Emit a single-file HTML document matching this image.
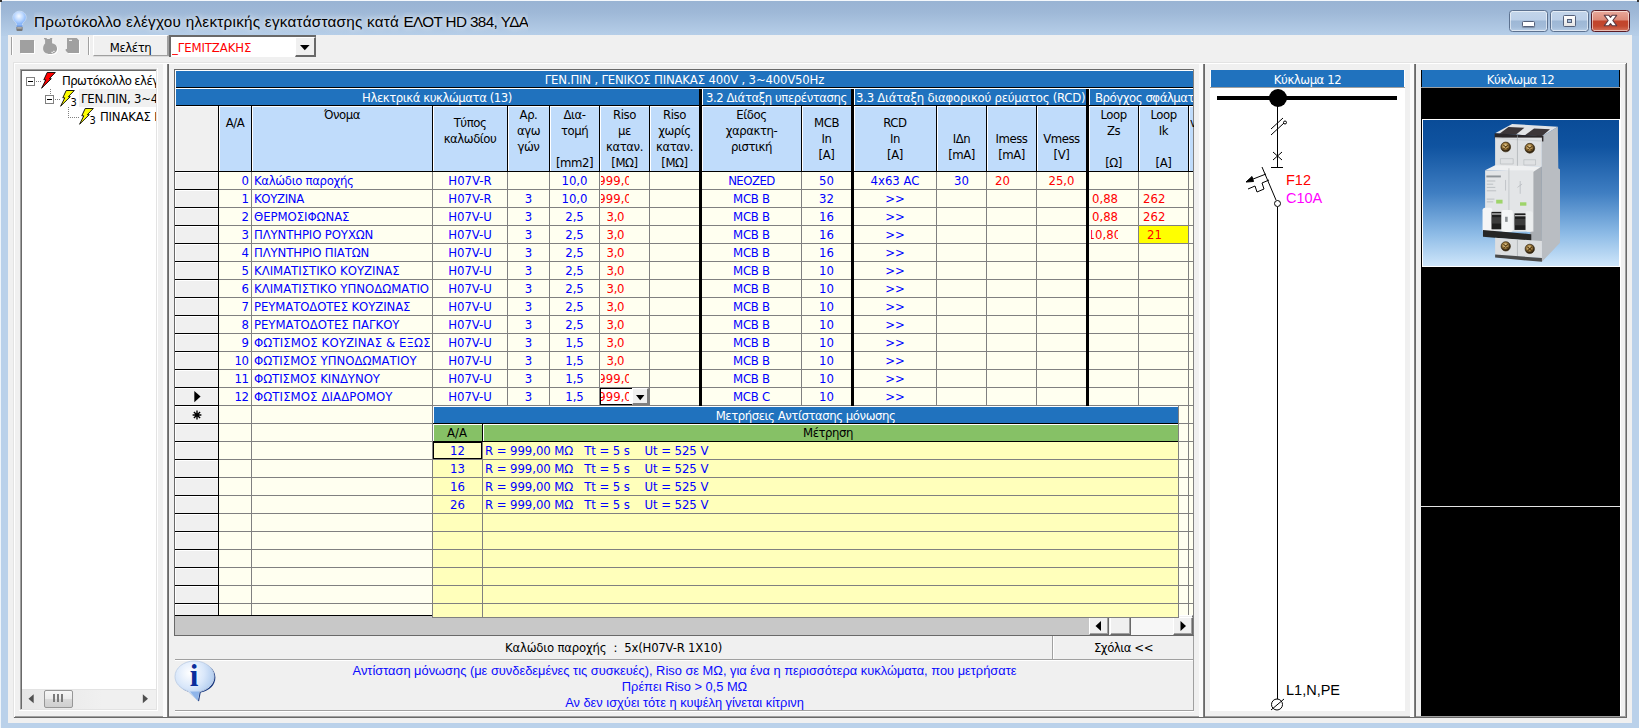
<!DOCTYPE html>
<html lang="el"><head><meta charset="utf-8"><title>Πρωτόκολλο ελέγχου</title>
<style>
html,body{margin:0;padding:0}
body{width:1639px;height:728px;overflow:hidden;position:relative;background:#bad1ea;font-family:"DejaVu Sans Condensed","Liberation Sans",sans-serif;font-size:13px;color:#000}
div,span{box-sizing:border-box}
.a{position:absolute}
.t{position:absolute;white-space:pre;line-height:18px;height:18px;overflow:hidden}
.c{text-align:center}
.r{text-align:right}
.b{color:#0000ff}
.rd{color:#ff0000}
.w{color:#fff}
.ls{letter-spacing:-0.45px}
.d{letter-spacing:-0.18px}
.dl{letter-spacing:-0.32px}
svg{position:absolute;overflow:visible}
</style></head><body>

<div class="a" style="left:0px;top:0px;width:1639px;height:36px;background:linear-gradient(#98b3d3 0,#9eb8d7 12px,#b6cee8 35px);"></div>
<div class="a" style="left:0px;top:0px;width:1639px;height:1px;background:#f4f8fc;"></div>
<div class="a" style="left:0px;top:0px;width:1px;height:728px;background:#eef4fa;"></div>
<div class="a" style="left:0px;top:0px;width:2px;height:2px;background:#333;"></div>
<div class="a" style="left:1637px;top:0px;width:2px;height:2px;background:#333;"></div>
<div class="a" style="left:8px;top:35px;width:1624px;height:688px;background:#f0f0f0;"></div>
<svg style="left:11px;top:10px" width="18" height="22" viewBox="0 0 18 22">
<defs><radialGradient id="gb" cx="0.45" cy="0.35" r="0.6"><stop offset="0" stop-color="#f4f9ff"/><stop offset="0.55" stop-color="#b9d6ff"/><stop offset="1" stop-color="#7fb0f8"/></radialGradient></defs>
<path d="M8.5 1.2C4.6 1.2 1.8 3.9 1.8 7.4c0 2.4 1.5 4 2.9 5.2c.6.6.9 1.5.9 2.6h5.8c0-1.100.3-2 .9-2.600C13.700 11.400 15.200 9.800 15.200 7.400C15.200 3.900 12.400 1.200 8.500 1.200z" fill="url(#gb)" stroke="#c9dcf4" stroke-width="0.8"/>
<rect x="5.6" y="15.200" width="5.800" height="1.700" fill="#6ea0f0"/>
<rect x="5.400" y="16.700" width="6.200" height="4.200" rx="0.8" fill="#777"/>
<rect x="6.200" y="17.500" width="4.600" height="0.900" fill="#ddd"/>
</svg>
<div class="t" style="left:34px;top:12px;font-family:'Liberation Sans',sans-serif;font-size:15.25px;line-height:20px;height:22px;text-shadow:0 0 5px rgba(255,255,255,.9),0 0 9px rgba(255,255,255,.7)"><span style="letter-spacing:0.26px">Πρωτόκολλο ελέγχου ηλεκτρικής εγκατάστασης κατά </span><span style="letter-spacing:-0.62px">ΕΛΟΤ HD 384, ΥΔΑ</span></div>
<div class="a" style="left:1509px;top:10px;width:39px;height:22px;border:1px solid #5d7290;border-radius:3.500px;background:linear-gradient(#c3d5ea 0,#bcd0e8 45%,#9db7d5 50%,#a3bcd9 80%,#b7cde6 100%);box-shadow:inset 0 0 0 1px rgba(255,255,255,.55)"></div>
<div class="a" style="left:1550px;top:10px;width:39px;height:22px;border:1px solid #5d7290;border-radius:3.500px;background:linear-gradient(#c3d5ea 0,#bcd0e8 45%,#9db7d5 50%,#a3bcd9 80%,#b7cde6 100%);box-shadow:inset 0 0 0 1px rgba(255,255,255,.55)"></div>
<div class="a" style="left:1591px;top:10px;width:39px;height:22px;border:1px solid #5b1b24;border-radius:3.500px;background:linear-gradient(#e9a99b 0,#dc8a79 45%,#c2442b 50%,#c2472e 75%,#d4735c 100%);box-shadow:inset 0 0 0 1px rgba(255,255,255,.55)"></div>
<div class="a" style="left:1522px;top:21px;width:13px;height:6px;background:#fff;border:1px solid #54607a;border-radius:1.5px;box-shadow:0 1px 1px rgba(0,0,0,.25)"></div>
<div class="a" style="left:1563px;top:15px;width:13px;height:12px;background:linear-gradient(#fff,#e4e4e4);border:1px solid #54607a;border-radius:1.5px"></div>
<div class="a" style="left:1567px;top:19px;width:5px;height:4px;background:#a9c0dc;border:1px solid #54607a"></div>
<svg style="left:1603px;top:14px" width="15" height="13" viewBox="0 0 15 13"><path d="M1.300 1.300h4.600l1.600 2.100l1.600-2.100h4.600l-3.900 5.200l3.900 5.200h-4.600l-1.600-2.100l-1.600 2.100h-4.600l3.900-5.200z" fill="#fff" stroke="#5a3a44" stroke-width="1.100" stroke-linejoin="round"/></svg>
<div class="a" style="left:11px;top:37px;width:1px;height:18px;background:#a0a0a0;"></div>
<div class="a" style="left:12px;top:37px;width:1px;height:18px;background:#fff;"></div>
<div class="a" style="left:88px;top:37px;width:1px;height:18px;background:#a0a0a0;"></div>
<div class="a" style="left:89px;top:37px;width:1px;height:18px;background:#fff;"></div>
<div class="a" style="left:20px;top:40px;width:14px;height:13px;background:#a0a0a0;box-shadow:1px 1px 0 #fff"></div>
<svg style="left:42px;top:37px" width="18" height="19" viewBox="0 0 18 19"><path d="M2 1h2.400l.800.900h2.400l.800-.900h1.800v5.300c3 .400 4.900 2.700 4.900 5.200c0 3.300-2.700 5.500-7 5.500s-7-2.200-7-5.500c0-2.300 1-4.300 2-5v-3.700l-1.100-.800z" fill="#fff" transform="translate(1,1)"/><path d="M2 1h2.400l.800.900h2.400l.800-.900h1.800v5.300c3 .400 4.900 2.700 4.900 5.200c0 3.300-2.700 5.500-7 5.500s-7-2.200-7-5.500c0-2.300 1-4.300 2-5v-3.700l-1.100-.800z" fill="#a0a0a0"/><rect x="9.500" y="14.800" width="1.200" height="1.200" fill="#fff"/><rect x="11.300" y="13.800" width="1.200" height="1.200" fill="#fff"/></svg>
<svg style="left:65px;top:37px" width="17" height="19" viewBox="0 0 17 19"><path d="M2 1h9.700l2.300 2.300v12.700h-11l-2.300-2.200v-1.800h1.300z" fill="#fff" transform="translate(1,1)"/><path d="M2 1h9.700l2.300 2.300v12.700h-11l-2.300-2.200v-1.800h1.300z" fill="#a0a0a0"/><rect x="4" y="2.800" width="3" height="1" fill="#fff"/></svg>
<div class="a c" style="left:93px;top:35px;width:76px;height:21px;background:#f0f0f0;border-top:1px solid #fff;border-left:1px solid #fff;border-right:2px solid #a0a0a0;border-bottom:1px solid #a0a0a0;box-shadow:0 1px 0 #dcdcdc"></div>
<div class="t c ls" style="left:93px;top:38.5px;width:75px;">Μελέτη</div>
<div class="a" style="left:169px;top:35px;width:147px;height:22px;background:#fff;border-top:2px solid #696969;border-left:2px solid #696969"></div>
<div class="t rd" style="left:172px;top:39px;width:120px;letter-spacing:-0.1px">_ΓΕΜΙΤΖΑΚΗΣ</div>
<div class="a" style="left:295px;top:37px;width:21px;height:20px;background:#f0f0f0;border-top:1px solid #fff;border-left:1px solid #fff;border-right:2px solid #696969;border-bottom:2px solid #696969"></div>
<svg style="left:299.500px;top:45px" width="10" height="6"><path d="M0 0h9.600l-4.800 5.200z" fill="#000"/></svg>
<div class="a" style="left:13px;top:62px;width:1614px;height:1px;background:#e3e3e3;"></div>
<div class="a" style="left:13px;top:62px;width:1px;height:656px;background:#e3e3e3;"></div>
<div class="a" style="left:14px;top:63px;width:1612px;height:1px;background:#fff;"></div>
<div class="a" style="left:14px;top:63px;width:1px;height:655px;background:#fff;"></div>
<div class="a" style="left:14px;top:717px;width:1613px;height:1px;background:#696969;"></div>
<div class="a" style="left:1626px;top:63px;width:1px;height:655px;background:#696969;"></div>
<div class="a" style="left:15px;top:716px;width:1611px;height:1px;background:#a0a0a0;"></div>
<div class="a" style="left:1625px;top:64px;width:1px;height:653px;background:#a0a0a0;"></div>
<div class="a" style="left:20px;top:69px;width:137px;height:641px;background:#fff;border-top:1px solid #a0a0a0;border-left:1px solid #a0a0a0;border-right:1px solid #e3e3e3;border-bottom:1px solid #e3e3e3;box-shadow:inset 1px 1px 0 #696969"></div>
<div class="a" style="left:19px;top:710px;width:139px;height:1px;background:#fff;"></div>
<div class="a" style="left:157px;top:68px;width:1px;height:643px;background:#fff;"></div>
<div class="a" style="left:79px;top:89px;width:77px;height:18px;background:#f0f0f0;"></div>
<div class="a" style="left:36px;top:81px;width:6px;height:1px;background:none;background-image:linear-gradient(90deg,#808080 1px,transparent 1px);background-size:2px 1px"></div>
<div class="a" style="left:50px;top:89px;width:1px;height:6px;background:none;background-image:linear-gradient(#808080 1px,transparent 1px);background-size:1px 2px"></div>
<div class="a" style="left:55px;top:99px;width:6px;height:1px;background:none;background-image:linear-gradient(90deg,#808080 1px,transparent 1px);background-size:2px 1px"></div>
<div class="a" style="left:68px;top:107px;width:1px;height:10px;background:none;background-image:linear-gradient(#808080 1px,transparent 1px);background-size:1px 2px"></div>
<div class="a" style="left:68px;top:117px;width:12px;height:1px;background:none;background-image:linear-gradient(90deg,#808080 1px,transparent 1px);background-size:2px 1px"></div>
<div class="a" style="left:26px;top:77px;width:9px;height:9px;background:#fff;border:1px solid #808080"></div>
<div class="a" style="left:28px;top:81px;width:5px;height:1px;background:#000;"></div>
<div class="a" style="left:45px;top:95px;width:9px;height:9px;background:#fff;border:1px solid #808080"></div>
<div class="a" style="left:47px;top:99px;width:5px;height:1px;background:#000;"></div>
<svg style="left:41px;top:71.5px" width="16" height="17" viewBox="0 0 16 17"><path d="M6.200 0.500H14.300L8.300 6.700H10.300L0.600 16.200L4.800 7.800H2.800Z" fill="#ff0000" stroke="#000" stroke-width="0.9" stroke-linejoin="miter"/></svg>
<svg style="left:60px;top:89.5px" width="16" height="17" viewBox="0 0 16 17"><path d="M6.200 0.500H14.300L8.300 6.700H10.300L0.600 16.200L4.800 7.800H2.800Z" fill="#ffff00" stroke="#000" stroke-width="0.9" stroke-linejoin="miter"/></svg>
<div class="t" style="left:70.5px;top:97px;font-size:11px;line-height:12px;height:12px">3</div>
<svg style="left:79px;top:107.5px" width="16" height="17" viewBox="0 0 16 17"><path d="M6.200 0.500H14.300L8.300 6.700H10.300L0.600 16.200L4.800 7.800H2.800Z" fill="#ffff00" stroke="#000" stroke-width="0.9" stroke-linejoin="miter"/></svg>
<div class="t" style="left:89.5px;top:115px;font-size:11px;line-height:12px;height:12px">3</div>
<div class="t " style="left:62px;top:72px;width:94px;letter-spacing:-0.6px">Πρωτόκολλο ελέγχου</div>
<div class="t " style="left:81px;top:90px;width:75px;letter-spacing:-0.2px">ΓΕΝ.ΠΙΝ, 3~400V</div>
<div class="t " style="left:100px;top:108px;width:56px;letter-spacing:-0.2px">ΠΙΝΑΚΑΣ ΙΣΟΓ</div>
<div class="a" style="left:22px;top:689px;width:134px;height:20px;background:linear-gradient(90deg,#e6e6e6,#f0f0f0 60%);border-top:1px solid #e3e3e3"></div>
<svg style="left:28px;top:693.500px" width="7" height="10"><path d="M5.700 0.300v9l-5.200-4.500z" fill="#505050"/></svg>
<svg style="left:141.500px;top:693.500px" width="7" height="10"><path d="M0.800 0.300v9l5.200-4.500z" fill="#505050"/></svg>
<div class="a" style="left:44px;top:690px;width:29px;height:18px;border:1px solid #979797;border-radius:2px;background:linear-gradient(#f6f6f6 0,#eaeaea 48%,#d9d9d9 52%,#cfcfcf 100%)"></div>
<div class="a" style="left:53px;top:694px;width:2px;height:8px;background:#7a7a7a;"></div>
<div class="a" style="left:57px;top:694px;width:2px;height:8px;background:#7a7a7a;"></div>
<div class="a" style="left:61px;top:694px;width:2px;height:8px;background:#7a7a7a;"></div>
<div class="a" style="left:163px;top:64px;width:4px;height:653px;background:#fbfbfb;"></div>
<div class="a" style="left:167px;top:64px;width:1px;height:653px;background:#808080;"></div>
<div class="a" style="left:168px;top:64px;width:1px;height:653px;background:#696969;"></div>
<div class="a" style="left:174px;top:69px;width:1020px;height:1px;background:#696969;"></div>
<div class="a" style="left:174px;top:69px;width:1px;height:567px;background:#696969;"></div>
<div class="a" style="left:1193px;top:69px;width:1px;height:567px;background:#808080;"></div>
<div class="a" style="left:175px;top:70px;width:1018px;height:546px;background:#000;"></div>
<div class="a" style="left:175px;top:70px;width:1018px;height:1px;background:#fff;"></div>
<div class="a" style="left:175px;top:70px;width:1px;height:36px;background:#fff;"></div>
<div class="a" style="left:175px;top:88px;width:1018px;height:1px;background:#fff;"></div>
<div class="a" style="left:176px;top:71px;width:1017px;height:16px;background:#2072be;"></div>
<div class="t c w" style="left:175px;top:70.5px;width:1019px;letter-spacing:-0.18px">ΓΕΝ.ΠΙΝ , ΓΕΝΙΚΟΣ ΠΙΝΑΚΑΣ 400V , 3~400V50Hz</div>
<div class="a" style="left:175px;top:88px;width:1px;height:17px;background:#fff;"></div>
<div class="a" style="left:176px;top:89px;width:523px;height:16px;background:#2072be;"></div>
<div class="t c w ls" style="left:175px;top:89px;width:524px;">Ηλεκτρικά κυκλώματα (13)</div>
<div class="a" style="left:702px;top:88px;width:1px;height:17px;background:#fff;"></div>
<div class="a" style="left:703px;top:89px;width:148px;height:16px;background:#2072be;"></div>
<div class="t c w ls" style="left:702px;top:89px;width:149px;">3.2 Διάταξη υπερέντασης</div>
<div class="a" style="left:854px;top:88px;width:1px;height:17px;background:#fff;"></div>
<div class="a" style="left:855px;top:89px;width:231px;height:16px;background:#2072be;"></div>
<div class="t w" style="left:854px;top:89px;width:232px;letter-spacing:-0.24px;padding-left:2px">3.3 Διάταξη διαφορικού ρεύματος (RCD)</div>
<div class="a" style="left:1089px;top:88px;width:1px;height:17px;background:#fff;"></div>
<div class="a" style="left:1090px;top:89px;width:103px;height:16px;background:#2072be;"></div>
<div class="t c w ls" style="left:1089px;top:89px;width:104px;text-align:left;padding-left:6px">Βρόγχος σφάλματος</div>
<div class="a" style="left:175px;top:106px;width:43px;height:65px;background:#f0f0f0;box-shadow:inset 1px 1px 0 #fff"></div>
<div class="a" style="left:219px;top:106px;width:32px;height:65px;background:#c0dcfb;box-shadow:inset 1px 1px 0 #fff"></div>
<div class="a" style="left:252px;top:106px;width:180px;height:65px;background:#c0dcfb;box-shadow:inset 1px 1px 0 #fff"></div>
<div class="a" style="left:433px;top:106px;width:74px;height:65px;background:#c0dcfb;box-shadow:inset 1px 1px 0 #fff"></div>
<div class="a" style="left:508px;top:106px;width:41px;height:65px;background:#c0dcfb;box-shadow:inset 1px 1px 0 #fff"></div>
<div class="a" style="left:550px;top:106px;width:49px;height:65px;background:#c0dcfb;box-shadow:inset 1px 1px 0 #fff"></div>
<div class="a" style="left:600px;top:106px;width:49px;height:65px;background:#c0dcfb;box-shadow:inset 1px 1px 0 #fff"></div>
<div class="a" style="left:650px;top:106px;width:49px;height:65px;background:#c0dcfb;box-shadow:inset 1px 1px 0 #fff"></div>
<div class="a" style="left:702px;top:106px;width:99px;height:65px;background:#c0dcfb;box-shadow:inset 1px 1px 0 #fff"></div>
<div class="a" style="left:802px;top:106px;width:49px;height:65px;background:#c0dcfb;box-shadow:inset 1px 1px 0 #fff"></div>
<div class="a" style="left:854px;top:106px;width:82px;height:65px;background:#c0dcfb;box-shadow:inset 1px 1px 0 #fff"></div>
<div class="a" style="left:937px;top:106px;width:49px;height:65px;background:#c0dcfb;box-shadow:inset 1px 1px 0 #fff"></div>
<div class="a" style="left:987px;top:106px;width:49px;height:65px;background:#c0dcfb;box-shadow:inset 1px 1px 0 #fff"></div>
<div class="a" style="left:1037px;top:106px;width:49px;height:65px;background:#c0dcfb;box-shadow:inset 1px 1px 0 #fff"></div>
<div class="a" style="left:1089px;top:106px;width:49px;height:65px;background:#c0dcfb;box-shadow:inset 1px 1px 0 #fff"></div>
<div class="a" style="left:1139px;top:106px;width:49px;height:65px;background:#c0dcfb;box-shadow:inset 1px 1px 0 #fff"></div>
<div class="a" style="left:1189px;top:106px;width:4px;height:65px;background:#c0dcfb;box-shadow:inset 1px 1px 0 #fff"></div>
<div class="t c ls" style="left:219px;top:114px;width:32px;">Α/Α</div>
<div class="t c ls" style="left:252px;top:106px;width:180px;">Όνομα</div>
<div class="t c ls" style="left:433px;top:114px;width:74px;">Τύπος</div>
<div class="t c ls" style="left:433px;top:130px;width:74px;">καλωδίου</div>
<div class="t c ls" style="left:508px;top:106px;width:41px;">Αρ.</div>
<div class="t c ls" style="left:508px;top:122px;width:41px;">αγω</div>
<div class="t c ls" style="left:508px;top:138px;width:41px;">γών</div>
<div class="t c ls" style="left:550px;top:106px;width:49px;">Δια-</div>
<div class="t c ls" style="left:550px;top:122px;width:49px;">τομή</div>
<div class="t c ls" style="left:550px;top:154px;width:49px;">[mm2]</div>
<div class="t c ls" style="left:600px;top:106px;width:49px;">Riso</div>
<div class="t c ls" style="left:600px;top:122px;width:49px;">με</div>
<div class="t c ls" style="left:600px;top:138px;width:49px;">καταν.</div>
<div class="t c ls" style="left:600px;top:154px;width:49px;">[ΜΩ]</div>
<div class="t c ls" style="left:650px;top:106px;width:49px;">Riso</div>
<div class="t c ls" style="left:650px;top:122px;width:49px;">χωρίς</div>
<div class="t c ls" style="left:650px;top:138px;width:49px;">καταν.</div>
<div class="t c ls" style="left:650px;top:154px;width:49px;">[ΜΩ]</div>
<div class="t c ls" style="left:702px;top:106px;width:99px;">Είδος</div>
<div class="t c ls" style="left:702px;top:122px;width:99px;">χαρακτη-</div>
<div class="t c ls" style="left:702px;top:138px;width:99px;">ριστική</div>
<div class="t c ls" style="left:802px;top:114px;width:49px;">MCB</div>
<div class="t c ls" style="left:802px;top:130px;width:49px;">In</div>
<div class="t c ls" style="left:802px;top:146px;width:49px;">[A]</div>
<div class="t c ls" style="left:854px;top:114px;width:82px;">RCD</div>
<div class="t c ls" style="left:854px;top:130px;width:82px;">In</div>
<div class="t c ls" style="left:854px;top:146px;width:82px;">[A]</div>
<div class="t c ls" style="left:937px;top:130px;width:49px;">IΔn</div>
<div class="t c ls" style="left:937px;top:146px;width:49px;">[mA]</div>
<div class="t c ls" style="left:987px;top:130px;width:49px;">Imess</div>
<div class="t c ls" style="left:987px;top:146px;width:49px;">[mA]</div>
<div class="t c ls" style="left:1037px;top:130px;width:49px;">Vmess</div>
<div class="t c ls" style="left:1037px;top:146px;width:49px;">[V]</div>
<div class="t c ls" style="left:1089px;top:106px;width:49px;">Loop</div>
<div class="t c ls" style="left:1089px;top:122px;width:49px;">Zs</div>
<div class="t c ls" style="left:1089px;top:154px;width:49px;">[Ω]</div>
<div class="t c ls" style="left:1139px;top:106px;width:49px;">Loop</div>
<div class="t c ls" style="left:1139px;top:122px;width:49px;">Ik</div>
<div class="t c ls" style="left:1139px;top:154px;width:49px;">[A]</div>
<div class="t " style="left:1190px;top:114px;width:4px;overflow:hidden">v</div>
<div class="a" style="left:175px;top:172px;width:43px;height:17px;background:#f0f0f0;box-shadow:inset 1px 1px 0 #fff"></div>
<div class="a" style="left:219px;top:172px;width:32px;height:17px;background:#fffff0;"></div>
<div class="a" style="left:252px;top:172px;width:180px;height:17px;background:#fffff0;"></div>
<div class="a" style="left:433px;top:172px;width:74px;height:17px;background:#fffff0;"></div>
<div class="a" style="left:508px;top:172px;width:41px;height:17px;background:#fffff0;"></div>
<div class="a" style="left:550px;top:172px;width:49px;height:17px;background:#fffff0;"></div>
<div class="a" style="left:600px;top:172px;width:49px;height:17px;background:#fffff0;"></div>
<div class="a" style="left:650px;top:172px;width:49px;height:17px;background:#fffff0;"></div>
<div class="a" style="left:702px;top:172px;width:99px;height:17px;background:#fffff0;"></div>
<div class="a" style="left:802px;top:172px;width:49px;height:17px;background:#fffff0;"></div>
<div class="a" style="left:854px;top:172px;width:82px;height:17px;background:#fffff0;"></div>
<div class="a" style="left:937px;top:172px;width:49px;height:17px;background:#fffff0;"></div>
<div class="a" style="left:987px;top:172px;width:49px;height:17px;background:#fffff0;"></div>
<div class="a" style="left:1037px;top:172px;width:49px;height:17px;background:#fffff0;"></div>
<div class="a" style="left:1089px;top:172px;width:49px;height:17px;background:#fffff0;"></div>
<div class="a" style="left:1139px;top:172px;width:49px;height:17px;background:#fffff0;"></div>
<div class="a" style="left:1189px;top:172px;width:4px;height:17px;background:#fffff0;"></div>
<div class="a" style="left:175px;top:190px;width:43px;height:17px;background:#f0f0f0;box-shadow:inset 1px 1px 0 #fff"></div>
<div class="a" style="left:219px;top:190px;width:32px;height:17px;background:#fffff0;"></div>
<div class="a" style="left:252px;top:190px;width:180px;height:17px;background:#fffff0;"></div>
<div class="a" style="left:433px;top:190px;width:74px;height:17px;background:#fffff0;"></div>
<div class="a" style="left:508px;top:190px;width:41px;height:17px;background:#fffff0;"></div>
<div class="a" style="left:550px;top:190px;width:49px;height:17px;background:#fffff0;"></div>
<div class="a" style="left:600px;top:190px;width:49px;height:17px;background:#fffff0;"></div>
<div class="a" style="left:650px;top:190px;width:49px;height:17px;background:#fffff0;"></div>
<div class="a" style="left:702px;top:190px;width:99px;height:17px;background:#fffff0;"></div>
<div class="a" style="left:802px;top:190px;width:49px;height:17px;background:#fffff0;"></div>
<div class="a" style="left:854px;top:190px;width:82px;height:17px;background:#fffff0;"></div>
<div class="a" style="left:937px;top:190px;width:49px;height:17px;background:#fffff0;"></div>
<div class="a" style="left:987px;top:190px;width:49px;height:17px;background:#fffff0;"></div>
<div class="a" style="left:1037px;top:190px;width:49px;height:17px;background:#fffff0;"></div>
<div class="a" style="left:1089px;top:190px;width:49px;height:17px;background:#fffff0;"></div>
<div class="a" style="left:1139px;top:190px;width:49px;height:17px;background:#fffff0;"></div>
<div class="a" style="left:1189px;top:190px;width:4px;height:17px;background:#fffff0;"></div>
<div class="a" style="left:175px;top:208px;width:43px;height:17px;background:#f0f0f0;box-shadow:inset 1px 1px 0 #fff"></div>
<div class="a" style="left:219px;top:208px;width:32px;height:17px;background:#fffff0;"></div>
<div class="a" style="left:252px;top:208px;width:180px;height:17px;background:#fffff0;"></div>
<div class="a" style="left:433px;top:208px;width:74px;height:17px;background:#fffff0;"></div>
<div class="a" style="left:508px;top:208px;width:41px;height:17px;background:#fffff0;"></div>
<div class="a" style="left:550px;top:208px;width:49px;height:17px;background:#fffff0;"></div>
<div class="a" style="left:600px;top:208px;width:49px;height:17px;background:#fffff0;"></div>
<div class="a" style="left:650px;top:208px;width:49px;height:17px;background:#fffff0;"></div>
<div class="a" style="left:702px;top:208px;width:99px;height:17px;background:#fffff0;"></div>
<div class="a" style="left:802px;top:208px;width:49px;height:17px;background:#fffff0;"></div>
<div class="a" style="left:854px;top:208px;width:82px;height:17px;background:#fffff0;"></div>
<div class="a" style="left:937px;top:208px;width:49px;height:17px;background:#fffff0;"></div>
<div class="a" style="left:987px;top:208px;width:49px;height:17px;background:#fffff0;"></div>
<div class="a" style="left:1037px;top:208px;width:49px;height:17px;background:#fffff0;"></div>
<div class="a" style="left:1089px;top:208px;width:49px;height:17px;background:#fffff0;"></div>
<div class="a" style="left:1139px;top:208px;width:49px;height:17px;background:#fffff0;"></div>
<div class="a" style="left:1189px;top:208px;width:4px;height:17px;background:#fffff0;"></div>
<div class="a" style="left:175px;top:226px;width:43px;height:17px;background:#f0f0f0;box-shadow:inset 1px 1px 0 #fff"></div>
<div class="a" style="left:219px;top:226px;width:32px;height:17px;background:#fffff0;"></div>
<div class="a" style="left:252px;top:226px;width:180px;height:17px;background:#fffff0;"></div>
<div class="a" style="left:433px;top:226px;width:74px;height:17px;background:#fffff0;"></div>
<div class="a" style="left:508px;top:226px;width:41px;height:17px;background:#fffff0;"></div>
<div class="a" style="left:550px;top:226px;width:49px;height:17px;background:#fffff0;"></div>
<div class="a" style="left:600px;top:226px;width:49px;height:17px;background:#fffff0;"></div>
<div class="a" style="left:650px;top:226px;width:49px;height:17px;background:#fffff0;"></div>
<div class="a" style="left:702px;top:226px;width:99px;height:17px;background:#fffff0;"></div>
<div class="a" style="left:802px;top:226px;width:49px;height:17px;background:#fffff0;"></div>
<div class="a" style="left:854px;top:226px;width:82px;height:17px;background:#fffff0;"></div>
<div class="a" style="left:937px;top:226px;width:49px;height:17px;background:#fffff0;"></div>
<div class="a" style="left:987px;top:226px;width:49px;height:17px;background:#fffff0;"></div>
<div class="a" style="left:1037px;top:226px;width:49px;height:17px;background:#fffff0;"></div>
<div class="a" style="left:1089px;top:226px;width:49px;height:17px;background:#fffff0;"></div>
<div class="a" style="left:1139px;top:226px;width:49px;height:17px;background:#ffff00;"></div>
<div class="a" style="left:1189px;top:226px;width:4px;height:17px;background:#fffff0;"></div>
<div class="a" style="left:175px;top:244px;width:43px;height:17px;background:#f0f0f0;box-shadow:inset 1px 1px 0 #fff"></div>
<div class="a" style="left:219px;top:244px;width:32px;height:17px;background:#fffff0;"></div>
<div class="a" style="left:252px;top:244px;width:180px;height:17px;background:#fffff0;"></div>
<div class="a" style="left:433px;top:244px;width:74px;height:17px;background:#fffff0;"></div>
<div class="a" style="left:508px;top:244px;width:41px;height:17px;background:#fffff0;"></div>
<div class="a" style="left:550px;top:244px;width:49px;height:17px;background:#fffff0;"></div>
<div class="a" style="left:600px;top:244px;width:49px;height:17px;background:#fffff0;"></div>
<div class="a" style="left:650px;top:244px;width:49px;height:17px;background:#fffff0;"></div>
<div class="a" style="left:702px;top:244px;width:99px;height:17px;background:#fffff0;"></div>
<div class="a" style="left:802px;top:244px;width:49px;height:17px;background:#fffff0;"></div>
<div class="a" style="left:854px;top:244px;width:82px;height:17px;background:#fffff0;"></div>
<div class="a" style="left:937px;top:244px;width:49px;height:17px;background:#fffff0;"></div>
<div class="a" style="left:987px;top:244px;width:49px;height:17px;background:#fffff0;"></div>
<div class="a" style="left:1037px;top:244px;width:49px;height:17px;background:#fffff0;"></div>
<div class="a" style="left:1089px;top:244px;width:49px;height:17px;background:#fffff0;"></div>
<div class="a" style="left:1139px;top:244px;width:49px;height:17px;background:#fffff0;"></div>
<div class="a" style="left:1189px;top:244px;width:4px;height:17px;background:#fffff0;"></div>
<div class="a" style="left:175px;top:262px;width:43px;height:17px;background:#f0f0f0;box-shadow:inset 1px 1px 0 #fff"></div>
<div class="a" style="left:219px;top:262px;width:32px;height:17px;background:#fffff0;"></div>
<div class="a" style="left:252px;top:262px;width:180px;height:17px;background:#fffff0;"></div>
<div class="a" style="left:433px;top:262px;width:74px;height:17px;background:#fffff0;"></div>
<div class="a" style="left:508px;top:262px;width:41px;height:17px;background:#fffff0;"></div>
<div class="a" style="left:550px;top:262px;width:49px;height:17px;background:#fffff0;"></div>
<div class="a" style="left:600px;top:262px;width:49px;height:17px;background:#fffff0;"></div>
<div class="a" style="left:650px;top:262px;width:49px;height:17px;background:#fffff0;"></div>
<div class="a" style="left:702px;top:262px;width:99px;height:17px;background:#fffff0;"></div>
<div class="a" style="left:802px;top:262px;width:49px;height:17px;background:#fffff0;"></div>
<div class="a" style="left:854px;top:262px;width:82px;height:17px;background:#fffff0;"></div>
<div class="a" style="left:937px;top:262px;width:49px;height:17px;background:#fffff0;"></div>
<div class="a" style="left:987px;top:262px;width:49px;height:17px;background:#fffff0;"></div>
<div class="a" style="left:1037px;top:262px;width:49px;height:17px;background:#fffff0;"></div>
<div class="a" style="left:1089px;top:262px;width:49px;height:17px;background:#fffff0;"></div>
<div class="a" style="left:1139px;top:262px;width:49px;height:17px;background:#fffff0;"></div>
<div class="a" style="left:1189px;top:262px;width:4px;height:17px;background:#fffff0;"></div>
<div class="a" style="left:175px;top:280px;width:43px;height:17px;background:#f0f0f0;box-shadow:inset 1px 1px 0 #fff"></div>
<div class="a" style="left:219px;top:280px;width:32px;height:17px;background:#fffff0;"></div>
<div class="a" style="left:252px;top:280px;width:180px;height:17px;background:#fffff0;"></div>
<div class="a" style="left:433px;top:280px;width:74px;height:17px;background:#fffff0;"></div>
<div class="a" style="left:508px;top:280px;width:41px;height:17px;background:#fffff0;"></div>
<div class="a" style="left:550px;top:280px;width:49px;height:17px;background:#fffff0;"></div>
<div class="a" style="left:600px;top:280px;width:49px;height:17px;background:#fffff0;"></div>
<div class="a" style="left:650px;top:280px;width:49px;height:17px;background:#fffff0;"></div>
<div class="a" style="left:702px;top:280px;width:99px;height:17px;background:#fffff0;"></div>
<div class="a" style="left:802px;top:280px;width:49px;height:17px;background:#fffff0;"></div>
<div class="a" style="left:854px;top:280px;width:82px;height:17px;background:#fffff0;"></div>
<div class="a" style="left:937px;top:280px;width:49px;height:17px;background:#fffff0;"></div>
<div class="a" style="left:987px;top:280px;width:49px;height:17px;background:#fffff0;"></div>
<div class="a" style="left:1037px;top:280px;width:49px;height:17px;background:#fffff0;"></div>
<div class="a" style="left:1089px;top:280px;width:49px;height:17px;background:#fffff0;"></div>
<div class="a" style="left:1139px;top:280px;width:49px;height:17px;background:#fffff0;"></div>
<div class="a" style="left:1189px;top:280px;width:4px;height:17px;background:#fffff0;"></div>
<div class="a" style="left:175px;top:298px;width:43px;height:17px;background:#f0f0f0;box-shadow:inset 1px 1px 0 #fff"></div>
<div class="a" style="left:219px;top:298px;width:32px;height:17px;background:#fffff0;"></div>
<div class="a" style="left:252px;top:298px;width:180px;height:17px;background:#fffff0;"></div>
<div class="a" style="left:433px;top:298px;width:74px;height:17px;background:#fffff0;"></div>
<div class="a" style="left:508px;top:298px;width:41px;height:17px;background:#fffff0;"></div>
<div class="a" style="left:550px;top:298px;width:49px;height:17px;background:#fffff0;"></div>
<div class="a" style="left:600px;top:298px;width:49px;height:17px;background:#fffff0;"></div>
<div class="a" style="left:650px;top:298px;width:49px;height:17px;background:#fffff0;"></div>
<div class="a" style="left:702px;top:298px;width:99px;height:17px;background:#fffff0;"></div>
<div class="a" style="left:802px;top:298px;width:49px;height:17px;background:#fffff0;"></div>
<div class="a" style="left:854px;top:298px;width:82px;height:17px;background:#fffff0;"></div>
<div class="a" style="left:937px;top:298px;width:49px;height:17px;background:#fffff0;"></div>
<div class="a" style="left:987px;top:298px;width:49px;height:17px;background:#fffff0;"></div>
<div class="a" style="left:1037px;top:298px;width:49px;height:17px;background:#fffff0;"></div>
<div class="a" style="left:1089px;top:298px;width:49px;height:17px;background:#fffff0;"></div>
<div class="a" style="left:1139px;top:298px;width:49px;height:17px;background:#fffff0;"></div>
<div class="a" style="left:1189px;top:298px;width:4px;height:17px;background:#fffff0;"></div>
<div class="a" style="left:175px;top:316px;width:43px;height:17px;background:#f0f0f0;box-shadow:inset 1px 1px 0 #fff"></div>
<div class="a" style="left:219px;top:316px;width:32px;height:17px;background:#fffff0;"></div>
<div class="a" style="left:252px;top:316px;width:180px;height:17px;background:#fffff0;"></div>
<div class="a" style="left:433px;top:316px;width:74px;height:17px;background:#fffff0;"></div>
<div class="a" style="left:508px;top:316px;width:41px;height:17px;background:#fffff0;"></div>
<div class="a" style="left:550px;top:316px;width:49px;height:17px;background:#fffff0;"></div>
<div class="a" style="left:600px;top:316px;width:49px;height:17px;background:#fffff0;"></div>
<div class="a" style="left:650px;top:316px;width:49px;height:17px;background:#fffff0;"></div>
<div class="a" style="left:702px;top:316px;width:99px;height:17px;background:#fffff0;"></div>
<div class="a" style="left:802px;top:316px;width:49px;height:17px;background:#fffff0;"></div>
<div class="a" style="left:854px;top:316px;width:82px;height:17px;background:#fffff0;"></div>
<div class="a" style="left:937px;top:316px;width:49px;height:17px;background:#fffff0;"></div>
<div class="a" style="left:987px;top:316px;width:49px;height:17px;background:#fffff0;"></div>
<div class="a" style="left:1037px;top:316px;width:49px;height:17px;background:#fffff0;"></div>
<div class="a" style="left:1089px;top:316px;width:49px;height:17px;background:#fffff0;"></div>
<div class="a" style="left:1139px;top:316px;width:49px;height:17px;background:#fffff0;"></div>
<div class="a" style="left:1189px;top:316px;width:4px;height:17px;background:#fffff0;"></div>
<div class="a" style="left:175px;top:334px;width:43px;height:17px;background:#f0f0f0;box-shadow:inset 1px 1px 0 #fff"></div>
<div class="a" style="left:219px;top:334px;width:32px;height:17px;background:#fffff0;"></div>
<div class="a" style="left:252px;top:334px;width:180px;height:17px;background:#fffff0;"></div>
<div class="a" style="left:433px;top:334px;width:74px;height:17px;background:#fffff0;"></div>
<div class="a" style="left:508px;top:334px;width:41px;height:17px;background:#fffff0;"></div>
<div class="a" style="left:550px;top:334px;width:49px;height:17px;background:#fffff0;"></div>
<div class="a" style="left:600px;top:334px;width:49px;height:17px;background:#fffff0;"></div>
<div class="a" style="left:650px;top:334px;width:49px;height:17px;background:#fffff0;"></div>
<div class="a" style="left:702px;top:334px;width:99px;height:17px;background:#fffff0;"></div>
<div class="a" style="left:802px;top:334px;width:49px;height:17px;background:#fffff0;"></div>
<div class="a" style="left:854px;top:334px;width:82px;height:17px;background:#fffff0;"></div>
<div class="a" style="left:937px;top:334px;width:49px;height:17px;background:#fffff0;"></div>
<div class="a" style="left:987px;top:334px;width:49px;height:17px;background:#fffff0;"></div>
<div class="a" style="left:1037px;top:334px;width:49px;height:17px;background:#fffff0;"></div>
<div class="a" style="left:1089px;top:334px;width:49px;height:17px;background:#fffff0;"></div>
<div class="a" style="left:1139px;top:334px;width:49px;height:17px;background:#fffff0;"></div>
<div class="a" style="left:1189px;top:334px;width:4px;height:17px;background:#fffff0;"></div>
<div class="a" style="left:175px;top:352px;width:43px;height:17px;background:#f0f0f0;box-shadow:inset 1px 1px 0 #fff"></div>
<div class="a" style="left:219px;top:352px;width:32px;height:17px;background:#fffff0;"></div>
<div class="a" style="left:252px;top:352px;width:180px;height:17px;background:#fffff0;"></div>
<div class="a" style="left:433px;top:352px;width:74px;height:17px;background:#fffff0;"></div>
<div class="a" style="left:508px;top:352px;width:41px;height:17px;background:#fffff0;"></div>
<div class="a" style="left:550px;top:352px;width:49px;height:17px;background:#fffff0;"></div>
<div class="a" style="left:600px;top:352px;width:49px;height:17px;background:#fffff0;"></div>
<div class="a" style="left:650px;top:352px;width:49px;height:17px;background:#fffff0;"></div>
<div class="a" style="left:702px;top:352px;width:99px;height:17px;background:#fffff0;"></div>
<div class="a" style="left:802px;top:352px;width:49px;height:17px;background:#fffff0;"></div>
<div class="a" style="left:854px;top:352px;width:82px;height:17px;background:#fffff0;"></div>
<div class="a" style="left:937px;top:352px;width:49px;height:17px;background:#fffff0;"></div>
<div class="a" style="left:987px;top:352px;width:49px;height:17px;background:#fffff0;"></div>
<div class="a" style="left:1037px;top:352px;width:49px;height:17px;background:#fffff0;"></div>
<div class="a" style="left:1089px;top:352px;width:49px;height:17px;background:#fffff0;"></div>
<div class="a" style="left:1139px;top:352px;width:49px;height:17px;background:#fffff0;"></div>
<div class="a" style="left:1189px;top:352px;width:4px;height:17px;background:#fffff0;"></div>
<div class="a" style="left:175px;top:370px;width:43px;height:17px;background:#f0f0f0;box-shadow:inset 1px 1px 0 #fff"></div>
<div class="a" style="left:219px;top:370px;width:32px;height:17px;background:#fffff0;"></div>
<div class="a" style="left:252px;top:370px;width:180px;height:17px;background:#fffff0;"></div>
<div class="a" style="left:433px;top:370px;width:74px;height:17px;background:#fffff0;"></div>
<div class="a" style="left:508px;top:370px;width:41px;height:17px;background:#fffff0;"></div>
<div class="a" style="left:550px;top:370px;width:49px;height:17px;background:#fffff0;"></div>
<div class="a" style="left:600px;top:370px;width:49px;height:17px;background:#fffff0;"></div>
<div class="a" style="left:650px;top:370px;width:49px;height:17px;background:#fffff0;"></div>
<div class="a" style="left:702px;top:370px;width:99px;height:17px;background:#fffff0;"></div>
<div class="a" style="left:802px;top:370px;width:49px;height:17px;background:#fffff0;"></div>
<div class="a" style="left:854px;top:370px;width:82px;height:17px;background:#fffff0;"></div>
<div class="a" style="left:937px;top:370px;width:49px;height:17px;background:#fffff0;"></div>
<div class="a" style="left:987px;top:370px;width:49px;height:17px;background:#fffff0;"></div>
<div class="a" style="left:1037px;top:370px;width:49px;height:17px;background:#fffff0;"></div>
<div class="a" style="left:1089px;top:370px;width:49px;height:17px;background:#fffff0;"></div>
<div class="a" style="left:1139px;top:370px;width:49px;height:17px;background:#fffff0;"></div>
<div class="a" style="left:1189px;top:370px;width:4px;height:17px;background:#fffff0;"></div>
<div class="a" style="left:175px;top:388px;width:43px;height:17px;background:#f0f0f0;box-shadow:inset 1px 1px 0 #fff"></div>
<div class="a" style="left:219px;top:388px;width:32px;height:17px;background:#fffff0;"></div>
<div class="a" style="left:252px;top:388px;width:180px;height:17px;background:#fffff0;"></div>
<div class="a" style="left:433px;top:388px;width:74px;height:17px;background:#fffff0;"></div>
<div class="a" style="left:508px;top:388px;width:41px;height:17px;background:#fffff0;"></div>
<div class="a" style="left:550px;top:388px;width:49px;height:17px;background:#fffff0;"></div>
<div class="a" style="left:600px;top:388px;width:49px;height:17px;background:#fffff0;"></div>
<div class="a" style="left:650px;top:388px;width:49px;height:17px;background:#fffff0;"></div>
<div class="a" style="left:702px;top:388px;width:99px;height:17px;background:#fffff0;"></div>
<div class="a" style="left:802px;top:388px;width:49px;height:17px;background:#fffff0;"></div>
<div class="a" style="left:854px;top:388px;width:82px;height:17px;background:#fffff0;"></div>
<div class="a" style="left:937px;top:388px;width:49px;height:17px;background:#fffff0;"></div>
<div class="a" style="left:987px;top:388px;width:49px;height:17px;background:#fffff0;"></div>
<div class="a" style="left:1037px;top:388px;width:49px;height:17px;background:#fffff0;"></div>
<div class="a" style="left:1089px;top:388px;width:49px;height:17px;background:#fffff0;"></div>
<div class="a" style="left:1139px;top:388px;width:49px;height:17px;background:#fffff0;"></div>
<div class="a" style="left:1189px;top:388px;width:4px;height:17px;background:#fffff0;"></div>
<div class="a" style="left:175px;top:406px;width:43px;height:17px;background:#f0f0f0;box-shadow:inset 1px 1px 0 #fff"></div>
<div class="a" style="left:219px;top:406px;width:32px;height:17px;background:#fffff0;"></div>
<div class="a" style="left:252px;top:406px;width:180px;height:17px;background:#fffff0;"></div>
<div class="a" style="left:433px;top:406px;width:74px;height:17px;background:#fffff0;"></div>
<div class="a" style="left:508px;top:406px;width:41px;height:17px;background:#fffff0;"></div>
<div class="a" style="left:550px;top:406px;width:49px;height:17px;background:#fffff0;"></div>
<div class="a" style="left:600px;top:406px;width:49px;height:17px;background:#fffff0;"></div>
<div class="a" style="left:650px;top:406px;width:49px;height:17px;background:#fffff0;"></div>
<div class="a" style="left:702px;top:406px;width:99px;height:17px;background:#fffff0;"></div>
<div class="a" style="left:802px;top:406px;width:49px;height:17px;background:#fffff0;"></div>
<div class="a" style="left:854px;top:406px;width:82px;height:17px;background:#fffff0;"></div>
<div class="a" style="left:937px;top:406px;width:49px;height:17px;background:#fffff0;"></div>
<div class="a" style="left:987px;top:406px;width:49px;height:17px;background:#fffff0;"></div>
<div class="a" style="left:1037px;top:406px;width:49px;height:17px;background:#fffff0;"></div>
<div class="a" style="left:1089px;top:406px;width:49px;height:17px;background:#fffff0;"></div>
<div class="a" style="left:1139px;top:406px;width:49px;height:17px;background:#fffff0;"></div>
<div class="a" style="left:1189px;top:406px;width:4px;height:17px;background:#fffff0;"></div>
<div class="a" style="left:175px;top:424px;width:43px;height:17px;background:#f0f0f0;box-shadow:inset 1px 1px 0 #fff"></div>
<div class="a" style="left:219px;top:424px;width:32px;height:17px;background:#fffff0;"></div>
<div class="a" style="left:252px;top:424px;width:180px;height:17px;background:#fffff0;"></div>
<div class="a" style="left:433px;top:424px;width:74px;height:17px;background:#fffff0;"></div>
<div class="a" style="left:508px;top:424px;width:41px;height:17px;background:#fffff0;"></div>
<div class="a" style="left:550px;top:424px;width:49px;height:17px;background:#fffff0;"></div>
<div class="a" style="left:600px;top:424px;width:49px;height:17px;background:#fffff0;"></div>
<div class="a" style="left:650px;top:424px;width:49px;height:17px;background:#fffff0;"></div>
<div class="a" style="left:702px;top:424px;width:99px;height:17px;background:#fffff0;"></div>
<div class="a" style="left:802px;top:424px;width:49px;height:17px;background:#fffff0;"></div>
<div class="a" style="left:854px;top:424px;width:82px;height:17px;background:#fffff0;"></div>
<div class="a" style="left:937px;top:424px;width:49px;height:17px;background:#fffff0;"></div>
<div class="a" style="left:987px;top:424px;width:49px;height:17px;background:#fffff0;"></div>
<div class="a" style="left:1037px;top:424px;width:49px;height:17px;background:#fffff0;"></div>
<div class="a" style="left:1089px;top:424px;width:49px;height:17px;background:#fffff0;"></div>
<div class="a" style="left:1139px;top:424px;width:49px;height:17px;background:#fffff0;"></div>
<div class="a" style="left:1189px;top:424px;width:4px;height:17px;background:#fffff0;"></div>
<div class="a" style="left:175px;top:442px;width:43px;height:17px;background:#f0f0f0;box-shadow:inset 1px 1px 0 #fff"></div>
<div class="a" style="left:219px;top:442px;width:32px;height:17px;background:#fffff0;"></div>
<div class="a" style="left:252px;top:442px;width:180px;height:17px;background:#fffff0;"></div>
<div class="a" style="left:433px;top:442px;width:74px;height:17px;background:#fffff0;"></div>
<div class="a" style="left:508px;top:442px;width:41px;height:17px;background:#fffff0;"></div>
<div class="a" style="left:550px;top:442px;width:49px;height:17px;background:#fffff0;"></div>
<div class="a" style="left:600px;top:442px;width:49px;height:17px;background:#fffff0;"></div>
<div class="a" style="left:650px;top:442px;width:49px;height:17px;background:#fffff0;"></div>
<div class="a" style="left:702px;top:442px;width:99px;height:17px;background:#fffff0;"></div>
<div class="a" style="left:802px;top:442px;width:49px;height:17px;background:#fffff0;"></div>
<div class="a" style="left:854px;top:442px;width:82px;height:17px;background:#fffff0;"></div>
<div class="a" style="left:937px;top:442px;width:49px;height:17px;background:#fffff0;"></div>
<div class="a" style="left:987px;top:442px;width:49px;height:17px;background:#fffff0;"></div>
<div class="a" style="left:1037px;top:442px;width:49px;height:17px;background:#fffff0;"></div>
<div class="a" style="left:1089px;top:442px;width:49px;height:17px;background:#fffff0;"></div>
<div class="a" style="left:1139px;top:442px;width:49px;height:17px;background:#fffff0;"></div>
<div class="a" style="left:1189px;top:442px;width:4px;height:17px;background:#fffff0;"></div>
<div class="a" style="left:175px;top:460px;width:43px;height:17px;background:#f0f0f0;box-shadow:inset 1px 1px 0 #fff"></div>
<div class="a" style="left:219px;top:460px;width:32px;height:17px;background:#fffff0;"></div>
<div class="a" style="left:252px;top:460px;width:180px;height:17px;background:#fffff0;"></div>
<div class="a" style="left:433px;top:460px;width:74px;height:17px;background:#fffff0;"></div>
<div class="a" style="left:508px;top:460px;width:41px;height:17px;background:#fffff0;"></div>
<div class="a" style="left:550px;top:460px;width:49px;height:17px;background:#fffff0;"></div>
<div class="a" style="left:600px;top:460px;width:49px;height:17px;background:#fffff0;"></div>
<div class="a" style="left:650px;top:460px;width:49px;height:17px;background:#fffff0;"></div>
<div class="a" style="left:702px;top:460px;width:99px;height:17px;background:#fffff0;"></div>
<div class="a" style="left:802px;top:460px;width:49px;height:17px;background:#fffff0;"></div>
<div class="a" style="left:854px;top:460px;width:82px;height:17px;background:#fffff0;"></div>
<div class="a" style="left:937px;top:460px;width:49px;height:17px;background:#fffff0;"></div>
<div class="a" style="left:987px;top:460px;width:49px;height:17px;background:#fffff0;"></div>
<div class="a" style="left:1037px;top:460px;width:49px;height:17px;background:#fffff0;"></div>
<div class="a" style="left:1089px;top:460px;width:49px;height:17px;background:#fffff0;"></div>
<div class="a" style="left:1139px;top:460px;width:49px;height:17px;background:#fffff0;"></div>
<div class="a" style="left:1189px;top:460px;width:4px;height:17px;background:#fffff0;"></div>
<div class="a" style="left:175px;top:478px;width:43px;height:17px;background:#f0f0f0;box-shadow:inset 1px 1px 0 #fff"></div>
<div class="a" style="left:219px;top:478px;width:32px;height:17px;background:#fffff0;"></div>
<div class="a" style="left:252px;top:478px;width:180px;height:17px;background:#fffff0;"></div>
<div class="a" style="left:433px;top:478px;width:74px;height:17px;background:#fffff0;"></div>
<div class="a" style="left:508px;top:478px;width:41px;height:17px;background:#fffff0;"></div>
<div class="a" style="left:550px;top:478px;width:49px;height:17px;background:#fffff0;"></div>
<div class="a" style="left:600px;top:478px;width:49px;height:17px;background:#fffff0;"></div>
<div class="a" style="left:650px;top:478px;width:49px;height:17px;background:#fffff0;"></div>
<div class="a" style="left:702px;top:478px;width:99px;height:17px;background:#fffff0;"></div>
<div class="a" style="left:802px;top:478px;width:49px;height:17px;background:#fffff0;"></div>
<div class="a" style="left:854px;top:478px;width:82px;height:17px;background:#fffff0;"></div>
<div class="a" style="left:937px;top:478px;width:49px;height:17px;background:#fffff0;"></div>
<div class="a" style="left:987px;top:478px;width:49px;height:17px;background:#fffff0;"></div>
<div class="a" style="left:1037px;top:478px;width:49px;height:17px;background:#fffff0;"></div>
<div class="a" style="left:1089px;top:478px;width:49px;height:17px;background:#fffff0;"></div>
<div class="a" style="left:1139px;top:478px;width:49px;height:17px;background:#fffff0;"></div>
<div class="a" style="left:1189px;top:478px;width:4px;height:17px;background:#fffff0;"></div>
<div class="a" style="left:175px;top:496px;width:43px;height:17px;background:#f0f0f0;box-shadow:inset 1px 1px 0 #fff"></div>
<div class="a" style="left:219px;top:496px;width:32px;height:17px;background:#fffff0;"></div>
<div class="a" style="left:252px;top:496px;width:180px;height:17px;background:#fffff0;"></div>
<div class="a" style="left:433px;top:496px;width:74px;height:17px;background:#fffff0;"></div>
<div class="a" style="left:508px;top:496px;width:41px;height:17px;background:#fffff0;"></div>
<div class="a" style="left:550px;top:496px;width:49px;height:17px;background:#fffff0;"></div>
<div class="a" style="left:600px;top:496px;width:49px;height:17px;background:#fffff0;"></div>
<div class="a" style="left:650px;top:496px;width:49px;height:17px;background:#fffff0;"></div>
<div class="a" style="left:702px;top:496px;width:99px;height:17px;background:#fffff0;"></div>
<div class="a" style="left:802px;top:496px;width:49px;height:17px;background:#fffff0;"></div>
<div class="a" style="left:854px;top:496px;width:82px;height:17px;background:#fffff0;"></div>
<div class="a" style="left:937px;top:496px;width:49px;height:17px;background:#fffff0;"></div>
<div class="a" style="left:987px;top:496px;width:49px;height:17px;background:#fffff0;"></div>
<div class="a" style="left:1037px;top:496px;width:49px;height:17px;background:#fffff0;"></div>
<div class="a" style="left:1089px;top:496px;width:49px;height:17px;background:#fffff0;"></div>
<div class="a" style="left:1139px;top:496px;width:49px;height:17px;background:#fffff0;"></div>
<div class="a" style="left:1189px;top:496px;width:4px;height:17px;background:#fffff0;"></div>
<div class="a" style="left:175px;top:514px;width:43px;height:17px;background:#f0f0f0;box-shadow:inset 1px 1px 0 #fff"></div>
<div class="a" style="left:219px;top:514px;width:32px;height:17px;background:#fffff0;"></div>
<div class="a" style="left:252px;top:514px;width:180px;height:17px;background:#fffff0;"></div>
<div class="a" style="left:433px;top:514px;width:74px;height:17px;background:#fffff0;"></div>
<div class="a" style="left:508px;top:514px;width:41px;height:17px;background:#fffff0;"></div>
<div class="a" style="left:550px;top:514px;width:49px;height:17px;background:#fffff0;"></div>
<div class="a" style="left:600px;top:514px;width:49px;height:17px;background:#fffff0;"></div>
<div class="a" style="left:650px;top:514px;width:49px;height:17px;background:#fffff0;"></div>
<div class="a" style="left:702px;top:514px;width:99px;height:17px;background:#fffff0;"></div>
<div class="a" style="left:802px;top:514px;width:49px;height:17px;background:#fffff0;"></div>
<div class="a" style="left:854px;top:514px;width:82px;height:17px;background:#fffff0;"></div>
<div class="a" style="left:937px;top:514px;width:49px;height:17px;background:#fffff0;"></div>
<div class="a" style="left:987px;top:514px;width:49px;height:17px;background:#fffff0;"></div>
<div class="a" style="left:1037px;top:514px;width:49px;height:17px;background:#fffff0;"></div>
<div class="a" style="left:1089px;top:514px;width:49px;height:17px;background:#fffff0;"></div>
<div class="a" style="left:1139px;top:514px;width:49px;height:17px;background:#fffff0;"></div>
<div class="a" style="left:1189px;top:514px;width:4px;height:17px;background:#fffff0;"></div>
<div class="a" style="left:175px;top:532px;width:43px;height:17px;background:#f0f0f0;box-shadow:inset 1px 1px 0 #fff"></div>
<div class="a" style="left:219px;top:532px;width:32px;height:17px;background:#fffff0;"></div>
<div class="a" style="left:252px;top:532px;width:180px;height:17px;background:#fffff0;"></div>
<div class="a" style="left:433px;top:532px;width:74px;height:17px;background:#fffff0;"></div>
<div class="a" style="left:508px;top:532px;width:41px;height:17px;background:#fffff0;"></div>
<div class="a" style="left:550px;top:532px;width:49px;height:17px;background:#fffff0;"></div>
<div class="a" style="left:600px;top:532px;width:49px;height:17px;background:#fffff0;"></div>
<div class="a" style="left:650px;top:532px;width:49px;height:17px;background:#fffff0;"></div>
<div class="a" style="left:702px;top:532px;width:99px;height:17px;background:#fffff0;"></div>
<div class="a" style="left:802px;top:532px;width:49px;height:17px;background:#fffff0;"></div>
<div class="a" style="left:854px;top:532px;width:82px;height:17px;background:#fffff0;"></div>
<div class="a" style="left:937px;top:532px;width:49px;height:17px;background:#fffff0;"></div>
<div class="a" style="left:987px;top:532px;width:49px;height:17px;background:#fffff0;"></div>
<div class="a" style="left:1037px;top:532px;width:49px;height:17px;background:#fffff0;"></div>
<div class="a" style="left:1089px;top:532px;width:49px;height:17px;background:#fffff0;"></div>
<div class="a" style="left:1139px;top:532px;width:49px;height:17px;background:#fffff0;"></div>
<div class="a" style="left:1189px;top:532px;width:4px;height:17px;background:#fffff0;"></div>
<div class="a" style="left:175px;top:550px;width:43px;height:17px;background:#f0f0f0;box-shadow:inset 1px 1px 0 #fff"></div>
<div class="a" style="left:219px;top:550px;width:32px;height:17px;background:#fffff0;"></div>
<div class="a" style="left:252px;top:550px;width:180px;height:17px;background:#fffff0;"></div>
<div class="a" style="left:433px;top:550px;width:74px;height:17px;background:#fffff0;"></div>
<div class="a" style="left:508px;top:550px;width:41px;height:17px;background:#fffff0;"></div>
<div class="a" style="left:550px;top:550px;width:49px;height:17px;background:#fffff0;"></div>
<div class="a" style="left:600px;top:550px;width:49px;height:17px;background:#fffff0;"></div>
<div class="a" style="left:650px;top:550px;width:49px;height:17px;background:#fffff0;"></div>
<div class="a" style="left:702px;top:550px;width:99px;height:17px;background:#fffff0;"></div>
<div class="a" style="left:802px;top:550px;width:49px;height:17px;background:#fffff0;"></div>
<div class="a" style="left:854px;top:550px;width:82px;height:17px;background:#fffff0;"></div>
<div class="a" style="left:937px;top:550px;width:49px;height:17px;background:#fffff0;"></div>
<div class="a" style="left:987px;top:550px;width:49px;height:17px;background:#fffff0;"></div>
<div class="a" style="left:1037px;top:550px;width:49px;height:17px;background:#fffff0;"></div>
<div class="a" style="left:1089px;top:550px;width:49px;height:17px;background:#fffff0;"></div>
<div class="a" style="left:1139px;top:550px;width:49px;height:17px;background:#fffff0;"></div>
<div class="a" style="left:1189px;top:550px;width:4px;height:17px;background:#fffff0;"></div>
<div class="a" style="left:175px;top:568px;width:43px;height:17px;background:#f0f0f0;box-shadow:inset 1px 1px 0 #fff"></div>
<div class="a" style="left:219px;top:568px;width:32px;height:17px;background:#fffff0;"></div>
<div class="a" style="left:252px;top:568px;width:180px;height:17px;background:#fffff0;"></div>
<div class="a" style="left:433px;top:568px;width:74px;height:17px;background:#fffff0;"></div>
<div class="a" style="left:508px;top:568px;width:41px;height:17px;background:#fffff0;"></div>
<div class="a" style="left:550px;top:568px;width:49px;height:17px;background:#fffff0;"></div>
<div class="a" style="left:600px;top:568px;width:49px;height:17px;background:#fffff0;"></div>
<div class="a" style="left:650px;top:568px;width:49px;height:17px;background:#fffff0;"></div>
<div class="a" style="left:702px;top:568px;width:99px;height:17px;background:#fffff0;"></div>
<div class="a" style="left:802px;top:568px;width:49px;height:17px;background:#fffff0;"></div>
<div class="a" style="left:854px;top:568px;width:82px;height:17px;background:#fffff0;"></div>
<div class="a" style="left:937px;top:568px;width:49px;height:17px;background:#fffff0;"></div>
<div class="a" style="left:987px;top:568px;width:49px;height:17px;background:#fffff0;"></div>
<div class="a" style="left:1037px;top:568px;width:49px;height:17px;background:#fffff0;"></div>
<div class="a" style="left:1089px;top:568px;width:49px;height:17px;background:#fffff0;"></div>
<div class="a" style="left:1139px;top:568px;width:49px;height:17px;background:#fffff0;"></div>
<div class="a" style="left:1189px;top:568px;width:4px;height:17px;background:#fffff0;"></div>
<div class="a" style="left:175px;top:586px;width:43px;height:17px;background:#f0f0f0;box-shadow:inset 1px 1px 0 #fff"></div>
<div class="a" style="left:219px;top:586px;width:32px;height:17px;background:#fffff0;"></div>
<div class="a" style="left:252px;top:586px;width:180px;height:17px;background:#fffff0;"></div>
<div class="a" style="left:433px;top:586px;width:74px;height:17px;background:#fffff0;"></div>
<div class="a" style="left:508px;top:586px;width:41px;height:17px;background:#fffff0;"></div>
<div class="a" style="left:550px;top:586px;width:49px;height:17px;background:#fffff0;"></div>
<div class="a" style="left:600px;top:586px;width:49px;height:17px;background:#fffff0;"></div>
<div class="a" style="left:650px;top:586px;width:49px;height:17px;background:#fffff0;"></div>
<div class="a" style="left:702px;top:586px;width:99px;height:17px;background:#fffff0;"></div>
<div class="a" style="left:802px;top:586px;width:49px;height:17px;background:#fffff0;"></div>
<div class="a" style="left:854px;top:586px;width:82px;height:17px;background:#fffff0;"></div>
<div class="a" style="left:937px;top:586px;width:49px;height:17px;background:#fffff0;"></div>
<div class="a" style="left:987px;top:586px;width:49px;height:17px;background:#fffff0;"></div>
<div class="a" style="left:1037px;top:586px;width:49px;height:17px;background:#fffff0;"></div>
<div class="a" style="left:1089px;top:586px;width:49px;height:17px;background:#fffff0;"></div>
<div class="a" style="left:1139px;top:586px;width:49px;height:17px;background:#fffff0;"></div>
<div class="a" style="left:1189px;top:586px;width:4px;height:17px;background:#fffff0;"></div>
<div class="a" style="left:175px;top:604px;width:43px;height:12px;background:#f0f0f0;box-shadow:inset 1px 1px 0 #fff"></div>
<div class="a" style="left:219px;top:604px;width:32px;height:12px;background:#fffff0;"></div>
<div class="a" style="left:252px;top:604px;width:180px;height:12px;background:#fffff0;"></div>
<div class="a" style="left:433px;top:604px;width:74px;height:12px;background:#fffff0;"></div>
<div class="a" style="left:508px;top:604px;width:41px;height:12px;background:#fffff0;"></div>
<div class="a" style="left:550px;top:604px;width:49px;height:12px;background:#fffff0;"></div>
<div class="a" style="left:600px;top:604px;width:49px;height:12px;background:#fffff0;"></div>
<div class="a" style="left:650px;top:604px;width:49px;height:12px;background:#fffff0;"></div>
<div class="a" style="left:702px;top:604px;width:99px;height:12px;background:#fffff0;"></div>
<div class="a" style="left:802px;top:604px;width:49px;height:12px;background:#fffff0;"></div>
<div class="a" style="left:854px;top:604px;width:82px;height:12px;background:#fffff0;"></div>
<div class="a" style="left:937px;top:604px;width:49px;height:12px;background:#fffff0;"></div>
<div class="a" style="left:987px;top:604px;width:49px;height:12px;background:#fffff0;"></div>
<div class="a" style="left:1037px;top:604px;width:49px;height:12px;background:#fffff0;"></div>
<div class="a" style="left:1089px;top:604px;width:49px;height:12px;background:#fffff0;"></div>
<div class="a" style="left:1139px;top:604px;width:49px;height:12px;background:#fffff0;"></div>
<div class="a" style="left:1189px;top:604px;width:4px;height:12px;background:#fffff0;"></div>
<div class="a" style="left:219px;top:189px;width:480px;height:1px;background:#808080;"></div>
<div class="a" style="left:702px;top:189px;width:149px;height:1px;background:#808080;"></div>
<div class="a" style="left:854px;top:189px;width:232px;height:1px;background:#808080;"></div>
<div class="a" style="left:1089px;top:189px;width:104px;height:1px;background:#808080;"></div>
<div class="a" style="left:219px;top:207px;width:480px;height:1px;background:#808080;"></div>
<div class="a" style="left:702px;top:207px;width:149px;height:1px;background:#808080;"></div>
<div class="a" style="left:854px;top:207px;width:232px;height:1px;background:#808080;"></div>
<div class="a" style="left:1089px;top:207px;width:104px;height:1px;background:#808080;"></div>
<div class="a" style="left:219px;top:225px;width:480px;height:1px;background:#808080;"></div>
<div class="a" style="left:702px;top:225px;width:149px;height:1px;background:#808080;"></div>
<div class="a" style="left:854px;top:225px;width:232px;height:1px;background:#808080;"></div>
<div class="a" style="left:1089px;top:225px;width:104px;height:1px;background:#808080;"></div>
<div class="a" style="left:219px;top:243px;width:480px;height:1px;background:#808080;"></div>
<div class="a" style="left:702px;top:243px;width:149px;height:1px;background:#808080;"></div>
<div class="a" style="left:854px;top:243px;width:232px;height:1px;background:#808080;"></div>
<div class="a" style="left:1089px;top:243px;width:104px;height:1px;background:#808080;"></div>
<div class="a" style="left:219px;top:261px;width:480px;height:1px;background:#808080;"></div>
<div class="a" style="left:702px;top:261px;width:149px;height:1px;background:#808080;"></div>
<div class="a" style="left:854px;top:261px;width:232px;height:1px;background:#808080;"></div>
<div class="a" style="left:1089px;top:261px;width:104px;height:1px;background:#808080;"></div>
<div class="a" style="left:219px;top:279px;width:480px;height:1px;background:#808080;"></div>
<div class="a" style="left:702px;top:279px;width:149px;height:1px;background:#808080;"></div>
<div class="a" style="left:854px;top:279px;width:232px;height:1px;background:#808080;"></div>
<div class="a" style="left:1089px;top:279px;width:104px;height:1px;background:#808080;"></div>
<div class="a" style="left:219px;top:297px;width:480px;height:1px;background:#808080;"></div>
<div class="a" style="left:702px;top:297px;width:149px;height:1px;background:#808080;"></div>
<div class="a" style="left:854px;top:297px;width:232px;height:1px;background:#808080;"></div>
<div class="a" style="left:1089px;top:297px;width:104px;height:1px;background:#808080;"></div>
<div class="a" style="left:219px;top:315px;width:480px;height:1px;background:#808080;"></div>
<div class="a" style="left:702px;top:315px;width:149px;height:1px;background:#808080;"></div>
<div class="a" style="left:854px;top:315px;width:232px;height:1px;background:#808080;"></div>
<div class="a" style="left:1089px;top:315px;width:104px;height:1px;background:#808080;"></div>
<div class="a" style="left:219px;top:333px;width:480px;height:1px;background:#808080;"></div>
<div class="a" style="left:702px;top:333px;width:149px;height:1px;background:#808080;"></div>
<div class="a" style="left:854px;top:333px;width:232px;height:1px;background:#808080;"></div>
<div class="a" style="left:1089px;top:333px;width:104px;height:1px;background:#808080;"></div>
<div class="a" style="left:219px;top:351px;width:480px;height:1px;background:#808080;"></div>
<div class="a" style="left:702px;top:351px;width:149px;height:1px;background:#808080;"></div>
<div class="a" style="left:854px;top:351px;width:232px;height:1px;background:#808080;"></div>
<div class="a" style="left:1089px;top:351px;width:104px;height:1px;background:#808080;"></div>
<div class="a" style="left:219px;top:369px;width:480px;height:1px;background:#808080;"></div>
<div class="a" style="left:702px;top:369px;width:149px;height:1px;background:#808080;"></div>
<div class="a" style="left:854px;top:369px;width:232px;height:1px;background:#808080;"></div>
<div class="a" style="left:1089px;top:369px;width:104px;height:1px;background:#808080;"></div>
<div class="a" style="left:219px;top:387px;width:480px;height:1px;background:#808080;"></div>
<div class="a" style="left:702px;top:387px;width:149px;height:1px;background:#808080;"></div>
<div class="a" style="left:854px;top:387px;width:232px;height:1px;background:#808080;"></div>
<div class="a" style="left:1089px;top:387px;width:104px;height:1px;background:#808080;"></div>
<div class="a" style="left:219px;top:405px;width:480px;height:1px;background:#808080;"></div>
<div class="a" style="left:702px;top:405px;width:149px;height:1px;background:#808080;"></div>
<div class="a" style="left:854px;top:405px;width:232px;height:1px;background:#808080;"></div>
<div class="a" style="left:1089px;top:405px;width:104px;height:1px;background:#808080;"></div>
<div class="a" style="left:219px;top:423px;width:480px;height:1px;background:#808080;"></div>
<div class="a" style="left:702px;top:423px;width:149px;height:1px;background:#808080;"></div>
<div class="a" style="left:854px;top:423px;width:232px;height:1px;background:#808080;"></div>
<div class="a" style="left:1089px;top:423px;width:104px;height:1px;background:#808080;"></div>
<div class="a" style="left:219px;top:441px;width:480px;height:1px;background:#808080;"></div>
<div class="a" style="left:702px;top:441px;width:149px;height:1px;background:#808080;"></div>
<div class="a" style="left:854px;top:441px;width:232px;height:1px;background:#808080;"></div>
<div class="a" style="left:1089px;top:441px;width:104px;height:1px;background:#808080;"></div>
<div class="a" style="left:219px;top:459px;width:480px;height:1px;background:#808080;"></div>
<div class="a" style="left:702px;top:459px;width:149px;height:1px;background:#808080;"></div>
<div class="a" style="left:854px;top:459px;width:232px;height:1px;background:#808080;"></div>
<div class="a" style="left:1089px;top:459px;width:104px;height:1px;background:#808080;"></div>
<div class="a" style="left:219px;top:477px;width:480px;height:1px;background:#808080;"></div>
<div class="a" style="left:702px;top:477px;width:149px;height:1px;background:#808080;"></div>
<div class="a" style="left:854px;top:477px;width:232px;height:1px;background:#808080;"></div>
<div class="a" style="left:1089px;top:477px;width:104px;height:1px;background:#808080;"></div>
<div class="a" style="left:219px;top:495px;width:480px;height:1px;background:#808080;"></div>
<div class="a" style="left:702px;top:495px;width:149px;height:1px;background:#808080;"></div>
<div class="a" style="left:854px;top:495px;width:232px;height:1px;background:#808080;"></div>
<div class="a" style="left:1089px;top:495px;width:104px;height:1px;background:#808080;"></div>
<div class="a" style="left:219px;top:513px;width:480px;height:1px;background:#808080;"></div>
<div class="a" style="left:702px;top:513px;width:149px;height:1px;background:#808080;"></div>
<div class="a" style="left:854px;top:513px;width:232px;height:1px;background:#808080;"></div>
<div class="a" style="left:1089px;top:513px;width:104px;height:1px;background:#808080;"></div>
<div class="a" style="left:219px;top:531px;width:480px;height:1px;background:#808080;"></div>
<div class="a" style="left:702px;top:531px;width:149px;height:1px;background:#808080;"></div>
<div class="a" style="left:854px;top:531px;width:232px;height:1px;background:#808080;"></div>
<div class="a" style="left:1089px;top:531px;width:104px;height:1px;background:#808080;"></div>
<div class="a" style="left:219px;top:549px;width:480px;height:1px;background:#808080;"></div>
<div class="a" style="left:702px;top:549px;width:149px;height:1px;background:#808080;"></div>
<div class="a" style="left:854px;top:549px;width:232px;height:1px;background:#808080;"></div>
<div class="a" style="left:1089px;top:549px;width:104px;height:1px;background:#808080;"></div>
<div class="a" style="left:219px;top:567px;width:480px;height:1px;background:#808080;"></div>
<div class="a" style="left:702px;top:567px;width:149px;height:1px;background:#808080;"></div>
<div class="a" style="left:854px;top:567px;width:232px;height:1px;background:#808080;"></div>
<div class="a" style="left:1089px;top:567px;width:104px;height:1px;background:#808080;"></div>
<div class="a" style="left:219px;top:585px;width:480px;height:1px;background:#808080;"></div>
<div class="a" style="left:702px;top:585px;width:149px;height:1px;background:#808080;"></div>
<div class="a" style="left:854px;top:585px;width:232px;height:1px;background:#808080;"></div>
<div class="a" style="left:1089px;top:585px;width:104px;height:1px;background:#808080;"></div>
<div class="a" style="left:219px;top:603px;width:480px;height:1px;background:#808080;"></div>
<div class="a" style="left:702px;top:603px;width:149px;height:1px;background:#808080;"></div>
<div class="a" style="left:854px;top:603px;width:232px;height:1px;background:#808080;"></div>
<div class="a" style="left:1089px;top:603px;width:104px;height:1px;background:#808080;"></div>
<div class="a" style="left:251px;top:172px;width:1px;height:443px;background:#808080;"></div>
<div class="a" style="left:432px;top:172px;width:1px;height:443px;background:#808080;"></div>
<div class="a" style="left:507px;top:172px;width:1px;height:443px;background:#808080;"></div>
<div class="a" style="left:549px;top:172px;width:1px;height:443px;background:#808080;"></div>
<div class="a" style="left:599px;top:172px;width:1px;height:443px;background:#808080;"></div>
<div class="a" style="left:649px;top:172px;width:1px;height:443px;background:#808080;"></div>
<div class="a" style="left:801px;top:172px;width:1px;height:443px;background:#808080;"></div>
<div class="a" style="left:936px;top:172px;width:1px;height:443px;background:#808080;"></div>
<div class="a" style="left:986px;top:172px;width:1px;height:443px;background:#808080;"></div>
<div class="a" style="left:1036px;top:172px;width:1px;height:443px;background:#808080;"></div>
<div class="a" style="left:1138px;top:172px;width:1px;height:443px;background:#808080;"></div>
<div class="a" style="left:1188px;top:172px;width:1px;height:443px;background:#808080;"></div>
<div class="t r b" style="left:219px;top:172px;width:32px;padding-right:2.500px;letter-spacing:-0.4px">0</div>
<div class="t b" style="left:252px;top:172px;width:178px;padding-left:2px;letter-spacing:-0.32px">Καλώδιο παροχής</div>
<div class="t c b" style="left:433px;top:172px;width:74px;">H07V-R</div>
<div class="t c b" style="left:550px;top:172px;width:49px;">10,0</div>
<div class="t rd" style="left:601px;top:172px;width:28px;"><span style="position:absolute;left:-2.700px">999,0</span></div>
<div class="t c b" style="left:702px;top:172px;width:99px;letter-spacing:-0.5px">NEOZED</div>
<div class="t c b" style="left:802px;top:172px;width:49px;">50</div>
<div class="t c b" style="left:854px;top:172px;width:82px;">4x63 AC</div>
<div class="t c b" style="left:937px;top:172px;width:49px;">30</div>
<div class="t rd" style="left:995px;top:172px;width:40px;">20</div>
<div class="t c rd" style="left:1037px;top:172px;width:49px;">25,0</div>
<div class="t r b" style="left:219px;top:190px;width:32px;padding-right:2.500px;letter-spacing:-0.4px">1</div>
<div class="t b" style="left:252px;top:190px;width:178px;padding-left:2px;letter-spacing:-0.32px">ΚΟΥΖΙΝΑ</div>
<div class="t c b" style="left:433px;top:190px;width:74px;">H07V-R</div>
<div class="t c b" style="left:508px;top:190px;width:41px;">3</div>
<div class="t c b" style="left:550px;top:190px;width:49px;">10,0</div>
<div class="t rd" style="left:601px;top:190px;width:28px;"><span style="position:absolute;left:-2.700px">999,0</span></div>
<div class="t c b" style="left:702px;top:190px;width:99px;letter-spacing:-0.25px">MCB B</div>
<div class="t c b" style="left:802px;top:190px;width:49px;">32</div>
<div class="t c b" style="left:854px;top:190px;width:82px;">>></div>
<div class="t rd" style="left:1092px;top:190px;width:44px;">0,88</div>
<div class="t rd" style="left:1143px;top:190px;width:40px;">262</div>
<div class="t r b" style="left:219px;top:208px;width:32px;padding-right:2.500px;letter-spacing:-0.4px">2</div>
<div class="t b" style="left:252px;top:208px;width:178px;padding-left:2px;letter-spacing:-0.05px">ΘΕΡΜΟΣΙΦΩΝΑΣ</div>
<div class="t c b" style="left:433px;top:208px;width:74px;">H07V-U</div>
<div class="t c b" style="left:508px;top:208px;width:41px;">3</div>
<div class="t c b" style="left:550px;top:208px;width:49px;">2,5</div>
<div class="t rd" style="left:606.5px;top:208px;width:30px;letter-spacing:-0.3px">3,0</div>
<div class="t c b" style="left:702px;top:208px;width:99px;letter-spacing:-0.25px">MCB B</div>
<div class="t c b" style="left:802px;top:208px;width:49px;">16</div>
<div class="t c b" style="left:854px;top:208px;width:82px;">>></div>
<div class="t rd" style="left:1092px;top:208px;width:44px;">0,88</div>
<div class="t rd" style="left:1143px;top:208px;width:40px;">262</div>
<div class="t r b" style="left:219px;top:226px;width:32px;padding-right:2.500px;letter-spacing:-0.4px">3</div>
<div class="t b" style="left:252px;top:226px;width:178px;padding-left:2px;letter-spacing:-0.12px">ΠΛΥΝΤΗΡΙΟ ΡΟΥΧΩΝ</div>
<div class="t c b" style="left:433px;top:226px;width:74px;">H07V-U</div>
<div class="t c b" style="left:508px;top:226px;width:41px;">3</div>
<div class="t c b" style="left:550px;top:226px;width:49px;">2,5</div>
<div class="t rd" style="left:606.5px;top:226px;width:30px;letter-spacing:-0.3px">3,0</div>
<div class="t c b" style="left:702px;top:226px;width:99px;letter-spacing:-0.25px">MCB B</div>
<div class="t c b" style="left:802px;top:226px;width:49px;">16</div>
<div class="t c b" style="left:854px;top:226px;width:82px;">>></div>
<div class="t rd" style="left:1091px;top:226px;width:27px;"><span style="position:absolute;left:-3.400px">10,80</span></div>
<div class="t rd" style="left:1147px;top:226px;width:40px;">21</div>
<div class="t r b" style="left:219px;top:244px;width:32px;padding-right:2.500px;letter-spacing:-0.4px">4</div>
<div class="t b" style="left:252px;top:244px;width:178px;padding-left:2px;letter-spacing:-0.12px">ΠΛΥΝΤΗΡΙΟ ΠΙΑΤΩΝ</div>
<div class="t c b" style="left:433px;top:244px;width:74px;">H07V-U</div>
<div class="t c b" style="left:508px;top:244px;width:41px;">3</div>
<div class="t c b" style="left:550px;top:244px;width:49px;">2,5</div>
<div class="t rd" style="left:606.5px;top:244px;width:30px;letter-spacing:-0.3px">3,0</div>
<div class="t c b" style="left:702px;top:244px;width:99px;letter-spacing:-0.25px">MCB B</div>
<div class="t c b" style="left:802px;top:244px;width:49px;">16</div>
<div class="t c b" style="left:854px;top:244px;width:82px;">>></div>
<div class="t r b" style="left:219px;top:262px;width:32px;padding-right:2.500px;letter-spacing:-0.4px">5</div>
<div class="t b" style="left:252px;top:262px;width:178px;padding-left:2px;letter-spacing:-0.02px">ΚΛΙΜΑΤΙΣΤΙΚΟ ΚΟΥΖΙΝΑΣ</div>
<div class="t c b" style="left:433px;top:262px;width:74px;">H07V-U</div>
<div class="t c b" style="left:508px;top:262px;width:41px;">3</div>
<div class="t c b" style="left:550px;top:262px;width:49px;">2,5</div>
<div class="t rd" style="left:606.5px;top:262px;width:30px;letter-spacing:-0.3px">3,0</div>
<div class="t c b" style="left:702px;top:262px;width:99px;letter-spacing:-0.25px">MCB B</div>
<div class="t c b" style="left:802px;top:262px;width:49px;">10</div>
<div class="t c b" style="left:854px;top:262px;width:82px;">>></div>
<div class="t r b" style="left:219px;top:280px;width:32px;padding-right:2.500px;letter-spacing:-0.4px">6</div>
<div class="t b" style="left:252px;top:280px;width:178px;padding-left:2px;letter-spacing:0px">ΚΛΙΜΑΤΙΣΤΙΚΟ ΥΠΝΟΔΩΜΑΤΙΟ</div>
<div class="t c b" style="left:433px;top:280px;width:74px;">H07V-U</div>
<div class="t c b" style="left:508px;top:280px;width:41px;">3</div>
<div class="t c b" style="left:550px;top:280px;width:49px;">2,5</div>
<div class="t rd" style="left:606.5px;top:280px;width:30px;letter-spacing:-0.3px">3,0</div>
<div class="t c b" style="left:702px;top:280px;width:99px;letter-spacing:-0.25px">MCB B</div>
<div class="t c b" style="left:802px;top:280px;width:49px;">10</div>
<div class="t c b" style="left:854px;top:280px;width:82px;">>></div>
<div class="t r b" style="left:219px;top:298px;width:32px;padding-right:2.500px;letter-spacing:-0.4px">7</div>
<div class="t b" style="left:252px;top:298px;width:178px;padding-left:2px;letter-spacing:-0.1px">ΡΕΥΜΑΤΟΔΟΤΕΣ ΚΟΥΖΙΝΑΣ</div>
<div class="t c b" style="left:433px;top:298px;width:74px;">H07V-U</div>
<div class="t c b" style="left:508px;top:298px;width:41px;">3</div>
<div class="t c b" style="left:550px;top:298px;width:49px;">2,5</div>
<div class="t rd" style="left:606.5px;top:298px;width:30px;letter-spacing:-0.3px">3,0</div>
<div class="t c b" style="left:702px;top:298px;width:99px;letter-spacing:-0.25px">MCB B</div>
<div class="t c b" style="left:802px;top:298px;width:49px;">10</div>
<div class="t c b" style="left:854px;top:298px;width:82px;">>></div>
<div class="t r b" style="left:219px;top:316px;width:32px;padding-right:2.500px;letter-spacing:-0.4px">8</div>
<div class="t b" style="left:252px;top:316px;width:178px;padding-left:2px;letter-spacing:-0.04px">ΡΕΥΜΑΤΟΔΟΤΕΣ ΠΑΓΚΟΥ</div>
<div class="t c b" style="left:433px;top:316px;width:74px;">H07V-U</div>
<div class="t c b" style="left:508px;top:316px;width:41px;">3</div>
<div class="t c b" style="left:550px;top:316px;width:49px;">2,5</div>
<div class="t rd" style="left:606.5px;top:316px;width:30px;letter-spacing:-0.3px">3,0</div>
<div class="t c b" style="left:702px;top:316px;width:99px;letter-spacing:-0.25px">MCB B</div>
<div class="t c b" style="left:802px;top:316px;width:49px;">10</div>
<div class="t c b" style="left:854px;top:316px;width:82px;">>></div>
<div class="t r b" style="left:219px;top:334px;width:32px;padding-right:2.500px;letter-spacing:-0.4px">9</div>
<div class="t b" style="left:252px;top:334px;width:178px;padding-left:2px;letter-spacing:0.12px">ΦΩΤΙΣΜΟΣ ΚΟΥΖΙΝΑΣ &amp; ΕΞΩΣΤ</div>
<div class="t c b" style="left:433px;top:334px;width:74px;">H07V-U</div>
<div class="t c b" style="left:508px;top:334px;width:41px;">3</div>
<div class="t c b" style="left:550px;top:334px;width:49px;">1,5</div>
<div class="t rd" style="left:606.5px;top:334px;width:30px;letter-spacing:-0.3px">3,0</div>
<div class="t c b" style="left:702px;top:334px;width:99px;letter-spacing:-0.25px">MCB B</div>
<div class="t c b" style="left:802px;top:334px;width:49px;">10</div>
<div class="t c b" style="left:854px;top:334px;width:82px;">>></div>
<div class="t r b" style="left:219px;top:352px;width:32px;padding-right:2.500px;letter-spacing:-0.4px">10</div>
<div class="t b" style="left:252px;top:352px;width:178px;padding-left:2px;letter-spacing:0.01px">ΦΩΤΙΣΜΟΣ ΥΠΝΟΔΩΜΑΤΙΟΥ</div>
<div class="t c b" style="left:433px;top:352px;width:74px;">H07V-U</div>
<div class="t c b" style="left:508px;top:352px;width:41px;">3</div>
<div class="t c b" style="left:550px;top:352px;width:49px;">1,5</div>
<div class="t rd" style="left:606.5px;top:352px;width:30px;letter-spacing:-0.3px">3,0</div>
<div class="t c b" style="left:702px;top:352px;width:99px;letter-spacing:-0.25px">MCB B</div>
<div class="t c b" style="left:802px;top:352px;width:49px;">10</div>
<div class="t c b" style="left:854px;top:352px;width:82px;">>></div>
<div class="t r b" style="left:219px;top:370px;width:32px;padding-right:2.500px;letter-spacing:-0.4px">11</div>
<div class="t b" style="left:252px;top:370px;width:178px;padding-left:2px;letter-spacing:-0.04px">ΦΩΤΙΣΜΟΣ ΚΙΝΔΥΝΟΥ</div>
<div class="t c b" style="left:433px;top:370px;width:74px;">H07V-U</div>
<div class="t c b" style="left:508px;top:370px;width:41px;">3</div>
<div class="t c b" style="left:550px;top:370px;width:49px;">1,5</div>
<div class="t rd" style="left:601px;top:370px;width:28px;"><span style="position:absolute;left:-2.700px">999,0</span></div>
<div class="t c b" style="left:702px;top:370px;width:99px;letter-spacing:-0.25px">MCB B</div>
<div class="t c b" style="left:802px;top:370px;width:49px;">10</div>
<div class="t c b" style="left:854px;top:370px;width:82px;">>></div>
<div class="t r b" style="left:219px;top:388px;width:32px;padding-right:2.500px;letter-spacing:-0.4px">12</div>
<div class="t b" style="left:252px;top:388px;width:178px;padding-left:2px;letter-spacing:0.1px">ΦΩΤΙΣΜΟΣ ΔΙΑΔΡΟΜΟΥ</div>
<div class="t c b" style="left:433px;top:388px;width:74px;">H07V-U</div>
<div class="t c b" style="left:508px;top:388px;width:41px;">3</div>
<div class="t c b" style="left:550px;top:388px;width:49px;">1,5</div>
<div class="t rd" style="left:601px;top:388px;width:28px;"><span style="position:absolute;left:-2.700px">999,0</span></div>
<div class="t c b" style="left:702px;top:388px;width:99px;letter-spacing:-0.25px">MCB C</div>
<div class="t c b" style="left:802px;top:388px;width:49px;">10</div>
<div class="t c b" style="left:854px;top:388px;width:82px;">>></div>
<svg style="left:193.800px;top:391px" width="8" height="12"><path d="M0.300 0v11.200l6.300-5.600z" fill="#000"/></svg>
<svg style="left:191.500px;top:410px" width="10" height="10" viewBox="0 0 10 10"><g stroke="#000" stroke-width="1.400"><path d="M5 0.600v8.800M0.600 5h8.800M1.900 1.900l6.200 6.200M8.100 1.900l-6.200 6.200"/></g></svg>
<div class="a" style="left:600px;top:388px;width:33px;height:17px;background:#fff;border:1px solid #000;border-right:none"></div>
<div class="t rd" style="left:601px;top:388px;width:28px;"><span style="position:absolute;left:-2.700px">999,0</span></div>
<div class="a" style="left:632px;top:388px;width:17px;height:17px;background:#f0f0f0;border-top:1px solid #fff;border-left:1px solid #fff;border-right:2px solid #808080;border-bottom:2px solid #808080"></div>
<svg style="left:635.500px;top:395px" width="9" height="6"><path d="M0 0h8.400l-4.200 5.200z" fill="#000"/></svg>
<div class="a" style="left:175px;top:616px;width:1018px;height:19px;background:#c8c8c8;"></div>
<div class="a" style="left:174px;top:635px;width:1020px;height:1px;background:#696969;"></div>
<div class="a" style="left:175px;top:615px;width:1004px;height:1px;background:#000;"></div>
<div class="a" style="left:1089px;top:617px;width:104px;height:18px;background:#f0f0f0;"></div>
<div class="a" style="left:1089px;top:617px;width:20px;height:18px;background:#f0f0f0;border-top:1px solid #fff;border-left:1px solid #fff;border-right:1px solid #696969;border-bottom:1px solid #696969;box-shadow:inset -1px -1px 0 #a0a0a0"></div>
<div class="a" style="left:1110px;top:617px;width:21px;height:18px;background:#f0f0f0;border-top:1px solid #fff;border-left:1px solid #fff;border-right:1px solid #696969;border-bottom:1px solid #696969;box-shadow:inset -1px -1px 0 #a0a0a0"></div>
<div class="a" style="left:1173px;top:617px;width:20px;height:18px;background:#f0f0f0;border-top:1px solid #fff;border-left:1px solid #fff;border-right:1px solid #696969;border-bottom:1px solid #696969;box-shadow:inset -1px -1px 0 #a0a0a0"></div>
<div class="a" style="left:1173px;top:615px;width:20px;height:2px;background:#f0f0f0;border-top:1px solid #fff;border-left:1px solid #fff;border-right:1px solid #696969"></div>
<div class="a" style="left:1131px;top:617px;width:42px;height:18px;background:#f7f7f7;"></div>
<svg style="left:1095px;top:620.500px" width="7" height="11"><path d="M6 0v10l-5.500-5z" fill="#000"/></svg>
<svg style="left:1180px;top:620.500px" width="7" height="11"><path d="M0.500 0v10l5.500-5z" fill="#000"/></svg>
<div class="a" style="left:433px;top:406px;width:745px;height:212px;background:#ffffbb;"></div>
<div class="a" style="left:433px;top:406px;width:745px;height:1px;background:#fff;"></div>
<div class="a" style="left:433px;top:406px;width:1px;height:36px;background:#fff;"></div>
<div class="a" style="left:434px;top:407px;width:744px;height:16px;background:#2072be;"></div>
<div class="a" style="left:433px;top:423px;width:745px;height:1px;background:#000;"></div>
<div class="a" style="left:433px;top:424px;width:745px;height:1px;background:#fff;"></div>
<div class="t c w ls" style="left:433px;top:407px;width:745px;">Μετρήσεις Αντίστασης μόνωσης</div>
<div class="a" style="left:434px;top:425px;width:48px;height:16px;background:#86c166;"></div>
<div class="a" style="left:484px;top:425px;width:694px;height:16px;background:#86c166;"></div>
<div class="a" style="left:482px;top:424px;width:1px;height:17px;background:#000;"></div>
<div class="a" style="left:483px;top:424px;width:1px;height:17px;background:#fff;"></div>
<div class="a" style="left:433px;top:441px;width:745px;height:1px;background:#000;"></div>
<div class="t c" style="left:433px;top:423.5px;width:48px;">Α/Α</div>
<div class="t c ls" style="left:481px;top:424px;width:694px;">Μέτρηση</div>
<div class="a" style="left:433px;top:459px;width:745px;height:1px;background:#808080;"></div>
<div class="a" style="left:433px;top:477px;width:745px;height:1px;background:#808080;"></div>
<div class="a" style="left:433px;top:495px;width:745px;height:1px;background:#808080;"></div>
<div class="a" style="left:433px;top:513px;width:745px;height:1px;background:#808080;"></div>
<div class="a" style="left:433px;top:531px;width:745px;height:1px;background:#808080;"></div>
<div class="a" style="left:433px;top:549px;width:745px;height:1px;background:#808080;"></div>
<div class="a" style="left:433px;top:567px;width:745px;height:1px;background:#808080;"></div>
<div class="a" style="left:433px;top:585px;width:745px;height:1px;background:#808080;"></div>
<div class="a" style="left:433px;top:603px;width:745px;height:1px;background:#808080;"></div>
<div class="a" style="left:482px;top:442px;width:1px;height:176px;background:#808080;"></div>
<div class="a" style="left:1178px;top:406px;width:1px;height:212px;background:#808080;"></div>
<div class="a" style="left:432px;top:406px;width:1px;height:212px;background:#808080;"></div>
<div class="a" style="left:433px;top:617px;width:746px;height:1px;background:#808080;"></div>
<div class="t c b" style="left:433px;top:442px;width:49px;">12</div>
<div class="t b" style="left:485px;top:442px;width:400px;letter-spacing:-0.06px">R = 999,00 ΜΩ   Tt = 5 s    Ut = 525 V</div>
<div class="t c b" style="left:433px;top:460px;width:49px;">13</div>
<div class="t b" style="left:485px;top:460px;width:400px;letter-spacing:-0.06px">R = 999,00 ΜΩ   Tt = 5 s    Ut = 525 V</div>
<div class="t c b" style="left:433px;top:478px;width:49px;">16</div>
<div class="t b" style="left:485px;top:478px;width:400px;letter-spacing:-0.06px">R = 999,00 ΜΩ   Tt = 5 s    Ut = 525 V</div>
<div class="t c b" style="left:433px;top:496px;width:49px;">26</div>
<div class="t b" style="left:485px;top:496px;width:400px;letter-spacing:-0.06px">R = 999,00 ΜΩ   Tt = 5 s    Ut = 525 V</div>
<div class="a" style="left:433px;top:441px;width:49px;height:18px;background:#ffffc8;border:1px solid #000;border-top-width:2px"></div>
<div class="t c b" style="left:433px;top:442px;width:49px;">12</div>
<div class="a" style="left:175px;top:659px;width:1018px;height:1px;background:#a0a0a0;"></div>
<div class="a" style="left:175px;top:660px;width:1018px;height:1px;background:#fff;"></div>
<div class="a" style="left:1052px;top:636px;width:1px;height:23px;background:#a0a0a0;"></div>
<div class="a" style="left:1053px;top:636px;width:1px;height:23px;background:#fff;"></div>
<div class="a" style="left:1193px;top:636px;width:1px;height:75px;background:#a0a0a0;"></div>
<div class="t c" style="left:175px;top:639px;width:877px;letter-spacing:-0.2px">Καλώδιο παροχής  :  5x(H07V-R 1X10)</div>
<div class="t c ls" style="left:1053px;top:639px;width:141px;">Σχόλια &lt;&lt;</div>
<div class="a" style="left:175px;top:710px;width:1019px;height:1px;background:#a0a0a0;"></div>
<div class="a" style="left:175px;top:711px;width:1019px;height:1px;background:#fff;"></div>
<div class="t c" style="left:175px;top:663px;width:1019px;font-family:'Liberation Sans',sans-serif;font-size:12.85px;color:#0a0aff;line-height:16px;height:16px">Αντίσταση μόνωσης (με συνδεδεμένες τις συσκευές), Riso σε ΜΩ, για ένα η περισσότερα κυκλώματα, που μετρήσατε</div>
<div class="t c" style="left:175px;top:679px;width:1019px;font-family:'Liberation Sans',sans-serif;font-size:12.85px;color:#0a0aff;line-height:16px;height:16px">Πρέπει Riso &gt; 0,5 ΜΩ</div>
<div class="t c" style="left:175px;top:695px;width:1019px;font-family:'Liberation Sans',sans-serif;font-size:12.85px;color:#0a0aff;line-height:16px;height:16px">Αν δεν ισχύει τότε η κυψέλη γίνεται κίτρινη</div>
<svg style="left:174px;top:659px" width="44" height="44" viewBox="0 0 44 44">
<defs><radialGradient id="gi" cx="0.38" cy="0.3" r="0.75"><stop offset="0" stop-color="#ffffff"/><stop offset="0.5" stop-color="#d9e7fa"/><stop offset="1" stop-color="#9fc0ea"/></radialGradient></defs>
<path id="bub" d="M20.500 2C9.700 2 1 8.900 1 17.500c0 6.600 5.200 12.200 12.600 14.400L23.600 41.500l1.700-8.900C34 31 40 25 40 17.500C40 8.900 31.300 2 20.500 2z" fill="#1b3a80" transform="translate(1.400,0.900)"/>
<path d="M20.500 2C9.700 2 1 8.900 1 17.500c0 6.600 5.200 12.200 12.600 14.400L23.600 41.500l1.700-8.900C34 31 40 25 40 17.500C40 8.900 31.300 2 20.500 2z" fill="url(#gi)" stroke="#c4d3e8" stroke-width="1"/>
<path d="M16 32.500L23.600 41.500l1.700-8.900z" fill="#8fb5ea"/>
<text x="20" y="27" text-anchor="middle" font-family="Liberation Serif,serif" font-weight="bold" font-size="31" fill="#0b2d9c">i</text>
</svg>
<div class="a" style="left:1199px;top:64px;width:4px;height:653px;background:#fbfbfb;"></div>
<div class="a" style="left:1203px;top:64px;width:1px;height:653px;background:#808080;"></div>
<div class="a" style="left:1204px;top:64px;width:1px;height:653px;background:#696969;"></div>
<div class="a" style="left:1210px;top:70px;width:195px;height:641px;background:#fff;"></div>
<div class="a" style="left:1211px;top:70px;width:193px;height:17px;background:#2072be;"></div>
<div class="a" style="left:1210px;top:87px;width:195px;height:1px;background:#a0a0a0;"></div>
<div class="t c w ls" style="left:1210px;top:70.5px;width:195px;">Κύκλωμα 12</div>
<svg style="left:1210px;top:88px" width="195" height="623" viewBox="1210 88 195 623">
<line x1="1217" y1="98" x2="1397" y2="98" stroke="#000" stroke-width="4"/>
<circle cx="1278" cy="98" r="9" fill="#000"/>
<g stroke="#000" stroke-width="1" fill="none">
<line x1="1277.500" y1="98" x2="1277.500" y2="167"/>
<line x1="1271" y1="129" x2="1283" y2="118"/>
<line x1="1271" y1="135" x2="1284" y2="123"/>
<circle cx="1285" cy="122.500" r="1.500"/>
<line x1="1273" y1="152" x2="1282" y2="160"/><line x1="1282" y1="152" x2="1273" y2="160"/>
<line x1="1271" y1="167.500" x2="1283" y2="167.500"/>
<line x1="1262" y1="167" x2="1276" y2="200"/>
<circle cx="1277.500" cy="203.500" r="3" fill="#fff"/>
<line x1="1277.500" y1="207" x2="1277.500" y2="699"/>
<line x1="1266" y1="174" x2="1248" y2="181"/>
<path d="M1246 182L1252 176.500L1253.500 181.500Z" fill="#000"/>
<path d="M1248 189L1255 186L1257 192L1264 189L1262 183L1269 180"/>
<circle cx="1277" cy="704.500" r="5.500" fill="#fff"/>
<line x1="1271" y1="710" x2="1284" y2="699"/>
</g>
<text x="1286" y="185" font-family="Liberation Sans,sans-serif" font-size="14.500" fill="#ff0000">F12</text>
<text x="1286" y="203" font-family="Liberation Sans,sans-serif" font-size="14.500" fill="#ff00ff">C10A</text>
<text x="1286" y="695" font-family="Liberation Sans,sans-serif" font-size="14.500" fill="#000">L1,N,PE</text>
</svg>
<div class="a" style="left:1410px;top:64px;width:4px;height:653px;background:#fbfbfb;"></div>
<div class="a" style="left:1414px;top:64px;width:1px;height:653px;background:#808080;"></div>
<div class="a" style="left:1415px;top:64px;width:1px;height:653px;background:#696969;"></div>
<div class="a" style="left:1421px;top:70px;width:199px;height:646px;background:#000;"></div>
<div class="a" style="left:1422px;top:70px;width:197px;height:17px;background:#2072be;"></div>
<div class="a" style="left:1421px;top:87px;width:199px;height:1px;background:#a0a0a0;"></div>
<div class="t c w ls" style="left:1421px;top:70.5px;width:199px;">Κύκλωμα 12</div>
<div class="a" style="left:1421px;top:506px;width:199px;height:1px;background:#e4e4e4;"></div>
<div class="a" style="left:1620px;top:88px;width:1px;height:628px;background:#fff;"></div>
<div class="a" style="left:1422px;top:119px;width:198px;height:148px;background:#fff;"></div>
<div class="a" style="left:1423px;top:120px;width:196px;height:146px;background:linear-gradient(#0a4c98 0,#0f53a0 18%,#3f7ec2 50%,#8dbbe6 78%,#cfe6fa 100%);"></div>
<svg style="left:1460px;top:115px" width="120" height="155" viewBox="0 0 564 728">
<defs><radialGradient id="gs" cx="0.45" cy="0.4" r="0.6"><stop offset="0" stop-color="#f2e2b8"/><stop offset="0.45" stop-color="#b08a48"/><stop offset="0.8" stop-color="#3a2a14"/><stop offset="1" stop-color="#2a1c0c"/></radialGradient></defs>
<polygon points="385,100 460,55 462,250 470,256 470,600 385,690" fill="#b9bdc2"/>
<polygon points="330,262 385,240 385,600 330,596" fill="#a9adb2"/>
<polygon points="165,85 245,42 460,55 385,100" fill="#e2e4e6"/>
<polygon points="228,56 303,60 262,92 185,88" fill="#3c3638"/>
<polygon points="348,63 423,67 385,100 305,95" fill="#3c3638"/>
<polygon points="163,86 392,99 392,124 163,110" fill="#2a2628"/>
<rect x="165" y="106" width="220" height="136" fill="#dfe1e3"/>
<polygon points="165,106 385,119 385,125 165,112" fill="#cfd2d5"/>
<line x1="270" y1="95" x2="270" y2="242" stroke="#a4a8ac" stroke-width="3"/>
<circle cx="215" cy="150" r="23" fill="url(#gs)" stroke="#3a2a10" stroke-width="3"/>
<circle cx="328" cy="156" r="23" fill="url(#gs)" stroke="#3a2a10" stroke-width="3"/>
<path d="M203 140l24 20M227 140l-24 20M316 146l24 20M340 146l-24 20" stroke="#5a3f14" stroke-width="5"/>
<path d="M190 205h60v25h-60zM300 210h55v25h-55z" fill="none" stroke="#b5b9bd" stroke-width="3"/>
<polygon points="118,260 165,236 385,241 345,266" fill="#eff0f1"/>
<rect x="118" y="260" width="227" height="288" fill="#e3e5e7"/>
<line x1="230" y1="250" x2="230" y2="548" stroke="#b4b8bc" stroke-width="3"/>
<rect x="124" y="284" width="68" height="9" fill="#8e9499"/>
<path d="M126 310h40M126 325h30M126 340h40M126 356h44M126 395h36M126 408h30" stroke="#b5b9bd" stroke-width="4"/>
<path d="M283 310v60M270 340l22-16M214 305v50" stroke="#aeb2b6" stroke-width="3" fill="none"/>
<rect x="170" y="398" width="30" height="18" fill="#9ed46a"/>
<rect x="282" y="410" width="30" height="16" fill="#9ed46a"/>
<rect x="106" y="436" width="46" height="116" rx="12" fill="#f4f5f6"/>
<rect x="148" y="455" width="50" height="82" fill="#1e1e1e"/><rect x="150" y="462" width="46" height="6" fill="#c8c8c8"/><rect x="150" y="480" width="46" height="30" fill="#3c3c3c"/>
<rect x="194" y="446" width="54" height="104" rx="10" fill="#f4f5f6"/>
<rect x="212" y="478" width="12" height="24" fill="#8a8e92"/>
<rect x="256" y="462" width="56" height="78" fill="#1e1e1e"/><rect x="258" y="470" width="52" height="6" fill="#c8c8c8"/><rect x="258" y="488" width="52" height="30" fill="#3c3c3c"/>
<rect x="308" y="452" width="34" height="96" rx="10" fill="#eceeef"/>
<polygon points="108,540 335,560 335,592 108,572" fill="#262626"/>
<polygon points="165,577 385,592 385,672 165,657" fill="#dcdee0"/>
<line x1="270" y1="586" x2="270" y2="664" stroke="#a4a8ac" stroke-width="3"/>
<circle cx="215" cy="617" r="22" fill="url(#gs)" stroke="#3a2a10" stroke-width="3"/>
<circle cx="328" cy="629" r="22" fill="url(#gs)" stroke="#3a2a10" stroke-width="3"/>
<path d="M204 607l22 20M226 607l-22 20M317 619l22 20M339 619l-22 20" stroke="#5a3f14" stroke-width="5"/>
<polygon points="165,655 385,672 385,690 165,670" fill="#4a4a4a"/>
</svg>
</body></html>
